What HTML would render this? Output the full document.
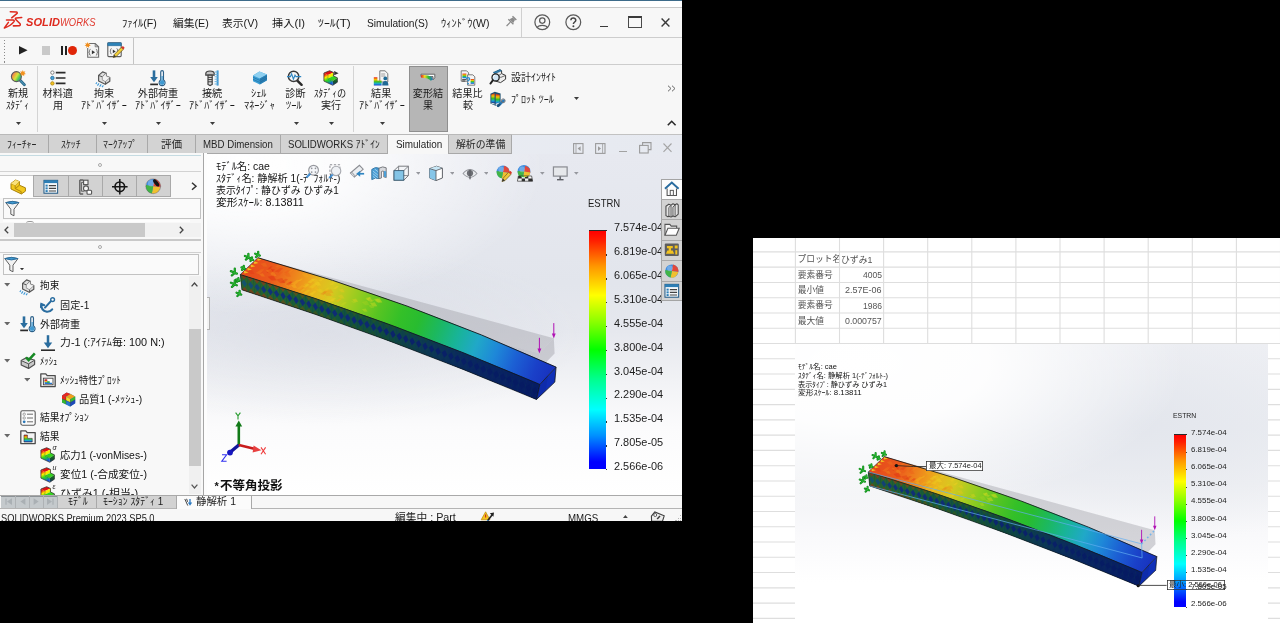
<!DOCTYPE html>
<html lang="ja"><head><meta charset="utf-8"><title>SOLIDWORKS Simulation - ひずみ (ESTRN) 結果</title>
<style>
html,body{margin:0;padding:0;background:#000}
body{width:1280px;height:623px;overflow:hidden;position:relative;font-family:"Liberation Sans","Noto Sans CJK JP",sans-serif}
#sw{position:absolute;left:0;top:0;width:682px;height:521px;background:#f7f7f7;overflow:hidden}
#xl{position:absolute;left:753px;top:238px;width:527px;height:385px;background:#fff;overflow:hidden}
.b{position:absolute}
.a{position:absolute;display:block}
.i{position:absolute;display:block;overflow:visible}
.t{position:absolute;white-space:nowrap;transform-origin:0 50%}
.blur{filter:blur(.3px)}
.soft{position:absolute;left:0;top:0;width:100%;height:100%;filter:blur(.35px)}
</style></head>
<body>
<svg width="0" height="0" style="position:absolute" aria-hidden="true"><defs><linearGradient id="rb" x1="0" y1="0" x2="0" y2="1"><stop offset="0" stop-color="#e8201a"/><stop offset=".3" stop-color="#f5c400"/><stop offset=".55" stop-color="#3cc024"/><stop offset=".8" stop-color="#18a8d8"/><stop offset="1" stop-color="#1a3cc8"/></linearGradient><linearGradient id="ctA" x1="0" y1="0" x2=".35" y2="1"><stop offset="0" stop-color="#e01010"/><stop offset=".18" stop-color="#f04010"/><stop offset=".38" stop-color="#ffee00"/><stop offset=".62" stop-color="#38d818"/><stop offset=".8" stop-color="#18b060"/><stop offset="1" stop-color="#1058e0"/></linearGradient><linearGradient id="ctB" x1="0" y1="0" x2="1" y2="1"><stop offset="0" stop-color="#f8a000"/><stop offset=".45" stop-color="#fff000"/><stop offset="1" stop-color="#a0e400"/></linearGradient><linearGradient id="ctC" x1="0" y1="0" x2="0" y2="1"><stop offset="0" stop-color="#1c8a1c"/><stop offset=".55" stop-color="#14502c"/><stop offset="1" stop-color="#103c90"/></linearGradient><linearGradient id="bmT" gradientUnits="userSpaceOnUse" x1="250" y1="262" x2="548" y2="376"><stop offset="0" stop-color="#e64c1c"/><stop offset="0.03" stop-color="#e8501c"/><stop offset="0.08" stop-color="#ea5a1c"/><stop offset="0.13" stop-color="#ee7a1c"/><stop offset="0.19" stop-color="#eea01c"/><stop offset="0.22" stop-color="#e6b81e"/><stop offset="0.27" stop-color="#d8c820"/><stop offset="0.32" stop-color="#b0cc20"/><stop offset="0.37" stop-color="#88cc20"/><stop offset="0.43" stop-color="#58c422"/><stop offset="0.5" stop-color="#34c028"/><stop offset="0.56" stop-color="#28bc30"/><stop offset="0.625" stop-color="#1cb860"/><stop offset="0.69" stop-color="#18b498"/><stop offset="0.755" stop-color="#20a8c8"/><stop offset="0.82" stop-color="#1e88d8"/><stop offset="0.885" stop-color="#1c60d4"/><stop offset="0.955" stop-color="#1a40c8"/><stop offset="1" stop-color="#1834c0"/></linearGradient><clipPath id="bmTop"><path d="M257.9 257.7Q407.0 299.7 556.1 367.1L539.9 384.4Q390.1 320.0 240.3 274.5Z"/></clipPath><g id="beam"><polygon points="257.9,257.7 553.8,338.2 539.4,353.2 240.3,274.5" fill="#94949c" fill-opacity=".36"/><polygon points="240.3,274.5 539.4,353.2 540.0,368.6 241.9,289.8" fill="#8a8a92" fill-opacity=".38"/><polygon points="553.8,338.2 554.6,353.6 540.0,368.6 539.4,353.2" fill="#a8a8b0" fill-opacity=".5"/><path d="M257.9 257.7Q407.0 299.7 556.1 367.1L539.9 384.4Q390.1 320.0 240.3 274.5Z" fill="url(#bmT)"/><g clip-path="url(#bmTop)"><polygon points="303.3,283.9 307.7,282.9 310.1,286.6 306.4,286.8" fill="#e8c81e" fill-opacity="0.27"/><polygon points="310.4,289.1 313.8,286.7 315.6,287.0 312.8,289.7" fill="#f6b41c" fill-opacity="0.26"/><polygon points="309.0,294.2 313.8,290.9 316.4,291.3 312.3,295.2" fill="#f0d020" fill-opacity="0.49"/><polygon points="326.9,292.7 331.8,291.6 334.4,295.7 330.3,295.9" fill="#f6b41c" fill-opacity="0.24"/><polygon points="274.9,271.6 280.2,267.9 283.1,268.3 278.6,272.6" fill="#e02c14" fill-opacity="0.34"/><polygon points="352.0,299.4 356.0,298.4 358.1,301.8 354.8,302.0" fill="#e0d020" fill-opacity="0.41"/><polygon points="307.3,282.3 312.4,278.7 315.2,279.1 310.8,283.2" fill="#f0d020" fill-opacity="0.43"/><polygon points="318.2,280.7 322.4,277.7 324.7,278.0 321.1,281.5" fill="#f0d020" fill-opacity="0.33"/><polygon points="361.9,309.2 365.6,308.4 367.6,311.5 364.5,311.7" fill="#d8dc20" fill-opacity="0.35"/><polygon points="370.0,303.3 374.7,302.2 377.3,306.2 373.3,306.4" fill="#d8dc20" fill-opacity="0.44"/><polygon points="288.5,271.9 291.6,269.7 293.3,270.0 290.7,272.5" fill="#f58a1a" fill-opacity="0.43"/><polygon points="267.7,268.5 270.8,266.3 272.5,266.6 269.9,269.1" fill="#e02c14" fill-opacity="0.44"/><polygon points="269.5,273.3 274.1,272.2 276.6,276.1 272.7,276.3" fill="#f7a21c" fill-opacity="0.34"/><polygon points="298.2,280.6 301.3,278.4 303.0,278.7 300.3,281.2" fill="#f6b41c" fill-opacity="0.50"/><polygon points="255.1,262.3 260.0,261.2 262.7,265.4 258.5,265.5" fill="#ee5a18" fill-opacity="0.23"/><polygon points="266.7,272.8 272.1,269.1 274.9,269.5 270.4,273.8" fill="#e02c14" fill-opacity="0.45"/><polygon points="301.6,274.3 306.4,273.2 309.0,277.2 305.0,277.4" fill="#f6b41c" fill-opacity="0.22"/><polygon points="291.1,283.9 296.9,279.8 300.1,280.3 295.1,285.0" fill="#f6b41c" fill-opacity="0.45"/><polygon points="267.2,269.4 271.2,268.5 273.4,271.9 270.0,272.1" fill="#e02c14" fill-opacity="0.45"/><polygon points="284.2,272.7 287.8,270.2 289.8,270.4 286.7,273.4" fill="#ee5a18" fill-opacity="0.47"/><polygon points="324.5,289.7 327.9,287.4 329.8,287.6 326.9,290.4" fill="#f0d020" fill-opacity="0.29"/><polygon points="338.7,289.8 342.7,288.8 344.8,292.2 341.5,292.3" fill="#e8c81e" fill-opacity="0.48"/><polygon points="373.3,299.1 378.0,298.0 380.6,302.0 376.6,302.2" fill="#c4d820" fill-opacity="0.30"/><polygon points="366.0,299.6 369.3,297.3 371.1,297.5 368.3,300.2" fill="#d8dc20" fill-opacity="0.34"/><polygon points="260.5,263.7 265.1,262.6 267.6,266.5 263.7,266.7" fill="#f58a1a" fill-opacity="0.25"/><polygon points="265.9,270.2 270.9,269.0 273.6,273.3 269.4,273.5" fill="#f58a1a" fill-opacity="0.39"/><polygon points="361.7,301.9 366.8,300.7 369.6,305.1 365.2,305.2" fill="#c4d820" fill-opacity="0.23"/><polygon points="327.2,290.2 331.2,289.3 333.4,292.7 330.0,292.9" fill="#ee7a1a" fill-opacity="0.24"/><polygon points="311.6,292.4 317.0,288.7 319.9,289.1 315.3,293.5" fill="#f6b41c" fill-opacity="0.32"/><polygon points="326.1,297.9 331.9,296.6 335.0,301.5 330.1,301.8" fill="#e8c81e" fill-opacity="0.46"/><polygon points="317.3,289.7 321.5,288.7 323.8,292.3 320.2,292.4" fill="#e8c81e" fill-opacity="0.39"/><polygon points="255.6,273.1 261.3,269.2 264.3,269.6 259.5,274.2" fill="#f58a1a" fill-opacity="0.33"/><polygon points="337.6,295.7 342.1,294.6 344.5,298.4 340.7,298.6" fill="#e8c81e" fill-opacity="0.37"/><polygon points="314.3,282.7 318.8,281.7 321.2,285.5 317.4,285.7" fill="#f0d020" fill-opacity="0.49"/><polygon points="259.0,274.1 262.9,273.2 265.0,276.4 261.7,276.6" fill="#f7a21c" fill-opacity="0.32"/><polygon points="265.3,274.6 268.9,272.1 270.8,272.4 267.8,275.3" fill="#ee5a18" fill-opacity="0.40"/><polygon points="297.5,290.2 301.8,287.3 304.1,287.6 300.5,291.1" fill="#ee7a1a" fill-opacity="0.28"/><polygon points="296.3,288.9 302.0,285.0 305.0,285.4 300.2,290.0" fill="#f6b41c" fill-opacity="0.28"/><polygon points="365.4,298.0 369.9,296.9 372.4,300.8 368.5,301.0" fill="#d8dc20" fill-opacity="0.42"/><polygon points="368.9,302.1 372.3,299.7 374.2,300.0 371.3,302.7" fill="#d8dc20" fill-opacity="0.30"/><polygon points="276.0,274.7 280.6,271.6 283.0,271.9 279.2,275.6" fill="#ee5a18" fill-opacity="0.42"/><polygon points="351.0,301.0 354.3,300.3 356.1,303.1 353.3,303.2" fill="#c4d820" fill-opacity="0.30"/><polygon points="320.4,293.9 325.2,290.7 327.7,291.0 323.7,294.9" fill="#ee7a1a" fill-opacity="0.40"/><polygon points="315.9,289.5 320.3,288.5 322.7,292.2 318.9,292.4" fill="#e8c81e" fill-opacity="0.44"/><polygon points="276.3,279.4 282.2,278.0 285.4,283.0 280.4,283.3" fill="#e02c14" fill-opacity="0.35"/><polygon points="322.6,292.1 328.5,290.7 331.7,295.7 326.7,295.9" fill="#ee7a1a" fill-opacity="0.28"/><polygon points="310.7,279.1 316.0,277.9 318.8,282.4 314.4,282.6" fill="#f0d020" fill-opacity="0.27"/><polygon points="284.1,273.9 288.7,272.8 291.1,276.7 287.3,276.8" fill="#ee5a18" fill-opacity="0.33"/><polygon points="340.3,304.8 344.6,301.9 346.9,302.2 343.2,305.7" fill="#d8dc20" fill-opacity="0.26"/><polygon points="302.7,286.9 306.9,284.0 309.2,284.3 305.6,287.7" fill="#f0d020" fill-opacity="0.35"/><polygon points="333.1,288.6 336.8,286.0 338.8,286.3 335.7,289.3" fill="#f0d020" fill-opacity="0.49"/><polygon points="368.4,305.4 372.3,304.5 374.3,307.8 371.1,308.0" fill="#c4d820" fill-opacity="0.32"/><polygon points="259.7,270.2 264.1,267.2 266.4,267.5 262.7,271.0" fill="#ee5a18" fill-opacity="0.36"/><polygon points="247.9,271.2 252.2,270.2 254.6,273.9 250.9,274.0" fill="#e02c14" fill-opacity="0.27"/><polygon points="285.7,284.6 290.2,281.5 292.6,281.8 288.8,285.4" fill="#e02c14" fill-opacity="0.48"/><polygon points="302.2,293.3 307.5,289.7 310.3,290.1 305.8,294.3" fill="#f0d020" fill-opacity="0.37"/><polygon points="280.9,282.0 285.5,278.8 288.0,279.2 284.1,282.9" fill="#e02c14" fill-opacity="0.31"/><polygon points="290.9,285.3 294.9,284.3 297.1,287.7 293.7,287.9" fill="#f6b41c" fill-opacity="0.49"/><polygon points="312.0,287.0 316.3,286.0 318.6,289.6 315.0,289.8" fill="#f6b41c" fill-opacity="0.36"/><polygon points="329.2,284.4 333.8,281.2 336.3,281.5 332.4,285.2" fill="#f0d020" fill-opacity="0.37"/><polygon points="374.6,299.5 379.7,298.3 382.4,302.6 378.1,302.8" fill="#d8dc20" fill-opacity="0.48"/><polygon points="299.5,291.2 303.4,288.6 305.5,288.8 302.2,292.0" fill="#e8c81e" fill-opacity="0.36"/><polygon points="284.6,284.3 289.2,283.2 291.7,287.1 287.8,287.3" fill="#f7a21c" fill-opacity="0.27"/><polygon points="318.0,295.7 323.1,294.5 325.9,298.8 321.6,299.0" fill="#f6b41c" fill-opacity="0.23"/><polygon points="274.9,266.9 278.9,264.1 281.1,264.4 277.7,267.6" fill="#f58a1a" fill-opacity="0.29"/><polygon points="308.9,287.2 314.5,283.3 317.5,283.7 312.8,288.2" fill="#f0d020" fill-opacity="0.42"/><polygon points="329.6,300.6 333.8,297.7 336.1,298.0 332.5,301.4" fill="#f0d020" fill-opacity="0.45"/><polygon points="323.5,290.1 328.1,289.0 330.6,292.9 326.7,293.1" fill="#f6b41c" fill-opacity="0.29"/><polygon points="335.5,301.2 339.5,298.4 341.7,298.7 338.3,302.0" fill="#f6b41c" fill-opacity="0.47"/><polygon points="267.7,276.7 273.4,275.4 276.4,280.2 271.6,280.4" fill="#e02c14" fill-opacity="0.47"/><polygon points="257.1,257.8 261.9,259.8 257.7,260.8" fill="#f4e424" fill-opacity=".75"/><polygon points="253.7,261.0 258.5,263.0 254.3,264.0" fill="#f4e424" fill-opacity=".75"/><polygon points="250.4,264.2 255.2,266.2 251.0,267.2" fill="#f4e424" fill-opacity=".75"/><polygon points="247.1,267.4 251.9,269.4 247.7,270.4" fill="#f4e424" fill-opacity=".75"/><polygon points="243.7,270.6 248.5,272.6 244.3,273.6" fill="#f4e424" fill-opacity=".75"/></g><path d="M240.3 274.5Q390.1 320.0 539.9 384.4L536.5 399.5Q389.2 337.2 241.9 289.8Z" fill="#14506e"/><polygon points="240.3,274.5 246.8,276.5 248.3,291.9 241.9,289.8" fill="#3d8a35"/><polygon points="240.3,274.5 246.8,276.5 244.0,279.6" fill="#a6571e"/><polygon points="241.9,289.8 248.3,291.9 244.7,287.0" fill="#a15c1f"/><polygon points="241.6,282.3 244.0,279.6 247.0,284.0 244.7,287.0" fill="#1c7590"/><polygon points="246.8,276.5 253.3,278.5 254.7,293.9 248.3,291.9" fill="#3a8a36"/><polygon points="246.8,276.5 253.3,278.5 250.5,281.7" fill="#a35a1f"/><polygon points="248.3,291.9 254.7,293.9 251.1,289.1" fill="#9e5f1f"/><polygon points="248.1,284.3 250.5,281.7 253.5,286.1 251.1,289.1" fill="#1c6b97"/><polygon points="253.3,278.5 259.8,280.5 261.1,296.0 254.7,293.9" fill="#368a38"/><polygon points="253.3,278.5 259.8,280.5 256.9,283.7" fill="#a05d1f"/><polygon points="254.7,293.9 261.1,296.0 257.6,291.1" fill="#9b6120"/><polygon points="254.5,286.4 256.9,283.7 260.0,288.1 257.6,291.1" fill="#1b5b9c"/><polygon points="259.8,280.5 266.4,282.6 267.5,298.2 261.1,296.0" fill="#338a39"/><polygon points="259.8,280.5 266.4,282.6 263.4,285.7" fill="#9d5f20"/><polygon points="261.1,296.0 267.5,298.2 264.0,293.2" fill="#946520"/><polygon points="261.0,288.4 263.4,285.7 266.4,290.2 264.0,293.2" fill="#1a4ba1"/><polygon points="266.4,282.6 272.9,284.6 273.9,300.3 267.5,298.2" fill="#308a3b"/><polygon points="266.4,282.6 272.9,284.6 269.9,287.8" fill="#9a6220"/><polygon points="267.5,298.2 273.9,300.3 270.4,295.3" fill="#8b6a21"/><polygon points="267.5,290.5 269.9,287.8 272.9,292.3 270.4,295.3" fill="#1946a1"/><polygon points="272.9,284.6 279.4,286.7 280.3,302.4 273.9,300.3" fill="#2c8a3c"/><polygon points="272.9,284.6 279.4,286.7 276.4,289.9" fill="#926620"/><polygon points="273.9,300.3 280.3,302.4 276.9,297.4" fill="#826e21"/><polygon points="273.9,292.6 276.4,289.9 279.3,294.4 276.9,297.4" fill="#1943a0"/><polygon points="279.4,286.7 285.9,288.8 286.7,304.6 280.3,302.4" fill="#2a883e"/><polygon points="279.4,286.7 285.9,288.8 282.9,292.0" fill="#896a21"/><polygon points="280.3,302.4 286.7,304.6 283.3,299.6" fill="#797221"/><polygon points="280.4,294.7 282.9,292.0 285.8,296.5 283.3,299.6" fill="#18419e"/><polygon points="285.9,288.8 292.4,290.9 293.1,306.7 286.7,304.6" fill="#288640"/><polygon points="285.9,288.8 292.4,290.9 289.4,294.1" fill="#816f21"/><polygon points="286.7,304.6 293.1,306.7 289.7,301.7" fill="#717722"/><polygon points="286.8,296.8 289.4,294.1 292.3,298.6 289.7,301.7" fill="#18409e"/><polygon points="292.4,290.9 298.9,293.0 299.5,308.9 293.1,306.7" fill="#268442"/><polygon points="292.4,290.9 298.9,293.0 295.8,296.2" fill="#787321"/><polygon points="293.1,306.7 299.5,308.9 296.2,303.9" fill="#687a22"/><polygon points="293.3,299.0 295.8,296.2 298.7,300.8 296.2,303.9" fill="#173f9e"/><polygon points="298.9,293.0 305.4,295.2 305.9,311.1 299.5,308.9" fill="#248144"/><polygon points="298.9,293.0 305.4,295.2 302.3,298.4" fill="#6f7722"/><polygon points="299.5,308.9 305.9,311.1 302.6,306.0" fill="#617a24"/><polygon points="299.7,301.1 302.3,298.4 305.2,303.0 302.6,306.0" fill="#173f9d"/><polygon points="305.4,295.2 311.9,297.3 312.3,313.3 305.9,311.1" fill="#227f46"/><polygon points="305.4,295.2 311.9,297.3 308.8,300.6" fill="#677a23"/><polygon points="305.9,311.1 312.3,313.3 309.0,308.2" fill="#5a7a26"/><polygon points="306.2,303.3 308.8,300.6 311.6,305.2 309.0,308.2" fill="#163e9d"/><polygon points="311.9,297.3 318.5,299.5 318.8,315.5 312.3,313.3" fill="#207d48"/><polygon points="311.9,297.3 318.5,299.5 315.3,302.8" fill="#607a25"/><polygon points="312.3,313.3 318.8,315.5 315.5,310.4" fill="#527a28"/><polygon points="312.7,305.5 315.3,302.8 318.1,307.4 315.5,310.4" fill="#163e9d"/><polygon points="318.5,299.5 325.0,301.7 325.2,317.8 318.8,315.5" fill="#1f7b49"/><polygon points="318.5,299.5 325.0,301.7 321.8,305.0" fill="#597a27"/><polygon points="318.8,315.5 325.2,317.8 321.9,312.7" fill="#4b7a2a"/><polygon points="319.1,307.7 321.8,305.0 324.5,309.6 321.9,312.7" fill="#163e9d"/><polygon points="325.0,301.7 331.5,303.9 331.6,320.0 325.2,317.8" fill="#1d794b"/><polygon points="325.0,301.7 331.5,303.9 328.3,307.2" fill="#517a28"/><polygon points="325.2,317.8 331.6,320.0 328.3,314.9" fill="#447a2c"/><polygon points="325.6,309.9 328.3,307.2 331.0,311.8 328.3,314.9" fill="#153d9d"/><polygon points="331.5,303.9 338.0,306.2 338.0,322.3 331.6,320.0" fill="#1c774d"/><polygon points="331.5,303.9 338.0,306.2 334.7,309.4" fill="#4a7a2a"/><polygon points="331.6,320.0 338.0,322.3 334.8,317.1" fill="#3c7a2e"/><polygon points="332.0,312.2 334.7,309.4 337.5,314.1 334.8,317.1" fill="#153d9c"/><polygon points="338.0,306.2 344.5,308.4 344.4,324.6 338.0,322.3" fill="#1b754d"/><polygon points="338.0,306.2 344.5,308.4 341.2,311.7" fill="#437a2c"/><polygon points="338.0,322.3 344.4,324.6 341.2,319.4" fill="#357a30"/><polygon points="338.5,314.4 341.2,311.7 343.9,316.3 341.2,319.4" fill="#143c9c"/><polygon points="344.5,308.4 351.0,310.7 350.8,326.9 344.4,324.6" fill="#1a734e"/><polygon points="344.5,308.4 351.0,310.7 347.7,313.9" fill="#3b7a2e"/><polygon points="344.4,324.6 350.8,326.9 347.6,321.7" fill="#317833"/><polygon points="345.0,316.7 347.7,313.9 350.4,318.6 347.6,321.7" fill="#143b9b"/><polygon points="351.0,310.7 357.5,313.0 357.2,329.2 350.8,326.9" fill="#1a714f"/><polygon points="351.0,310.7 357.5,313.0 354.2,316.2" fill="#347a30"/><polygon points="350.8,326.9 357.2,329.2 354.1,324.0" fill="#2e7536"/><polygon points="351.4,319.0 354.2,316.2 356.8,320.9 354.1,324.0" fill="#133a9a"/><polygon points="357.5,313.0 364.0,315.3 363.6,331.5 357.2,329.2" fill="#196f4f"/><polygon points="357.5,313.0 364.0,315.3 360.7,318.5" fill="#317733"/><polygon points="357.2,329.2 363.6,331.5 360.5,326.3" fill="#2a7239"/><polygon points="357.9,321.3 360.7,318.5 363.3,323.2 360.5,326.3" fill="#133998"/><polygon points="364.0,315.3 370.6,317.6 370.0,333.8 363.6,331.5" fill="#196d50"/><polygon points="364.0,315.3 370.6,317.6 367.2,320.8" fill="#2d7436"/><polygon points="363.6,331.5 370.0,333.8 366.9,328.6" fill="#276f3c"/><polygon points="364.3,323.6 367.2,320.8 369.8,325.5 366.9,328.6" fill="#133896"/><polygon points="370.6,317.6 377.1,320.0 376.4,336.2 370.0,333.8" fill="#186b51"/><polygon points="370.6,317.6 377.1,320.0 373.6,323.2" fill="#2a7239"/><polygon points="370.0,333.8 376.4,336.2 373.3,331.0" fill="#246c3f"/><polygon points="370.8,325.9 373.6,323.2 376.2,327.9 373.3,331.0" fill="#123694"/><polygon points="377.1,320.0 383.6,322.3 382.8,338.5 376.4,336.2" fill="#176952"/><polygon points="377.1,320.0 383.6,322.3 380.1,325.5" fill="#276f3c"/><polygon points="376.4,336.2 382.8,338.5 379.8,333.3" fill="#216a42"/><polygon points="377.2,328.3 380.1,325.5 382.7,330.3 379.8,333.3" fill="#123593"/><polygon points="383.6,322.3 390.1,324.7 389.2,340.9 382.8,338.5" fill="#176654"/><polygon points="383.6,322.3 390.1,324.7 386.6,327.9" fill="#236c3f"/><polygon points="382.8,338.5 389.2,340.9 386.2,335.7" fill="#1d6745"/><polygon points="383.7,330.6 386.6,327.9 389.1,332.6 386.2,335.7" fill="#113491"/><polygon points="390.1,324.7 396.6,327.1 395.6,343.3 389.2,340.9" fill="#166357"/><polygon points="390.1,324.7 396.6,327.1 393.1,330.3" fill="#206942"/><polygon points="389.2,340.9 395.6,343.3 392.6,338.1" fill="#1a6448"/><polygon points="390.2,333.0 393.1,330.3 395.6,335.0 392.6,338.1" fill="#11328f"/><polygon points="396.6,327.1 403.1,329.5 402.0,345.7 395.6,343.3" fill="#155f5b"/><polygon points="396.6,327.1 403.1,329.5 399.6,332.7" fill="#1d6646"/><polygon points="395.6,343.3 402.0,345.7 399.1,340.5" fill="#195f4d"/><polygon points="396.6,335.4 399.6,332.7 402.1,337.4 399.1,340.5" fill="#10318d"/><polygon points="403.1,329.5 409.6,332.0 408.4,348.1 402.0,345.7" fill="#155b5f"/><polygon points="403.1,329.5 409.6,332.0 406.1,335.1" fill="#1a6349"/><polygon points="402.0,345.7 408.4,348.1 405.5,342.9" fill="#175b52"/><polygon points="403.1,337.8 406.1,335.1 408.5,339.9 405.5,342.9" fill="#10308c"/><polygon points="409.6,332.0 416.2,334.4 414.8,350.6 408.4,348.1" fill="#145862"/><polygon points="409.6,332.0 416.2,334.4 412.5,337.6" fill="#185e4e"/><polygon points="408.4,348.1 414.8,350.6 411.9,345.3" fill="#165658"/><polygon points="409.5,340.3 412.5,337.6 415.0,342.3 411.9,345.3" fill="#0f2f8b"/><polygon points="416.2,334.4 422.7,336.9 421.2,353.0 414.8,350.6" fill="#145466"/><polygon points="416.2,334.4 422.7,336.9 419.0,340.0" fill="#175a53"/><polygon points="414.8,350.6 421.2,353.0 418.4,347.8" fill="#15515d"/><polygon points="416.0,342.7 419.0,340.0 421.4,344.8 418.4,347.8" fill="#0f2e8a"/><polygon points="422.7,336.9 429.2,339.4 427.6,355.5 421.2,353.0" fill="#13506a"/><polygon points="422.7,336.9 429.2,339.4 425.5,342.5" fill="#165558"/><polygon points="421.2,353.0 427.6,355.5 424.8,350.2" fill="#144d62"/><polygon points="422.5,345.2 425.5,342.5 427.9,347.2 424.8,350.2" fill="#0f2e8a"/><polygon points="429.2,339.4 435.7,341.9 434.0,358.0 427.6,355.5" fill="#124c6d"/><polygon points="429.2,339.4 435.7,341.9 432.0,345.0" fill="#15515d"/><polygon points="427.6,355.5 434.0,358.0 431.2,352.7" fill="#124867"/><polygon points="428.9,347.6 432.0,345.0 434.3,349.7 431.2,352.7" fill="#0e2d89"/><polygon points="435.7,341.9 442.2,344.4 440.4,360.5 434.0,358.0" fill="#124870"/><polygon points="435.7,341.9 442.2,344.4 438.5,347.5" fill="#134c63"/><polygon points="434.0,358.0 440.4,360.5 437.7,355.2" fill="#11446c"/><polygon points="435.4,350.1 438.5,347.5 440.8,352.2 437.7,355.2" fill="#0e2c88"/><polygon points="442.2,344.4 448.7,347.0 446.8,363.0 440.4,360.5" fill="#114573"/><polygon points="442.2,344.4 448.7,347.0 445.0,350.0" fill="#124768"/><polygon points="440.4,360.5 446.8,363.0 444.1,357.7" fill="#104070"/><polygon points="441.8,352.6 445.0,350.0 447.3,354.8 444.1,357.7" fill="#0d2c88"/><polygon points="448.7,347.0 455.2,349.5 453.2,365.5 446.8,363.0" fill="#104176"/><polygon points="448.7,347.0 455.2,349.5 451.5,352.5" fill="#11436d"/><polygon points="446.8,363.0 453.2,365.5 450.5,360.2" fill="#0f3e72"/><polygon points="448.3,355.2 451.5,352.5 453.7,357.3 450.5,360.2" fill="#0d2b87"/><polygon points="455.2,349.5 461.7,352.1 459.6,368.0 453.2,365.5" fill="#103d79"/><polygon points="455.2,349.5 461.7,352.1 457.9,355.1" fill="#103f71"/><polygon points="453.2,365.5 459.6,368.0 457.0,362.8" fill="#0f3c73"/><polygon points="454.8,357.7 457.9,355.1 460.2,359.8 457.0,362.8" fill="#0c2a86"/><polygon points="461.7,352.1 468.3,354.7 466.1,370.6 459.6,368.0" fill="#0f397c"/><polygon points="461.7,352.1 468.3,354.7 464.4,357.7" fill="#0f3d72"/><polygon points="459.6,368.0 466.1,370.6 463.4,365.3" fill="#0e3975"/><polygon points="461.2,360.3 464.4,357.7 466.6,362.4 463.4,365.3" fill="#0c2a86"/><polygon points="468.3,354.7 474.8,357.3 472.5,373.1 466.1,370.6" fill="#0e357f"/><polygon points="468.3,354.7 474.8,357.3 470.9,360.3" fill="#0f3b74"/><polygon points="466.1,370.6 472.5,373.1 469.8,367.9" fill="#0e3777"/><polygon points="467.7,362.8 470.9,360.3 473.1,365.0 469.8,367.9" fill="#0c2985"/><polygon points="474.8,357.3 481.3,359.9 478.9,375.7 472.5,373.1" fill="#0e3380"/><polygon points="474.8,357.3 481.3,359.9 477.4,362.9" fill="#0e3975"/><polygon points="472.5,373.1 478.9,375.7 476.3,370.5" fill="#0e3578"/><polygon points="474.1,365.4 477.4,362.9 479.6,367.6 476.3,370.5" fill="#0b2884"/><polygon points="481.3,359.9 487.8,362.6 485.3,378.3 478.9,375.7" fill="#0d3281"/><polygon points="481.3,359.9 487.8,362.6 483.9,365.5" fill="#0e3777"/><polygon points="478.9,375.7 485.3,378.3 482.7,373.0" fill="#0d337a"/><polygon points="480.6,368.0 483.9,365.5 486.0,370.2 482.7,373.0" fill="#0b2884"/><polygon points="487.8,362.6 494.3,365.2 491.7,380.9 485.3,378.3" fill="#0d3081"/><polygon points="487.8,362.6 494.3,365.2 490.4,368.1" fill="#0d3578"/><polygon points="485.3,378.3 491.7,380.9 489.1,375.7" fill="#0d317b"/><polygon points="487.0,370.6 490.4,368.1 492.5,372.8 489.1,375.7" fill="#0b2783"/><polygon points="494.3,365.2 500.8,367.9 498.1,383.5 491.7,380.9" fill="#0d2f81"/><polygon points="494.3,365.2 500.8,367.9 496.8,370.8" fill="#0d337a"/><polygon points="491.7,380.9 498.1,383.5 495.5,378.3" fill="#0c2f7d"/><polygon points="493.5,373.3 496.8,370.8 498.9,375.5 495.5,378.3" fill="#0a2683"/><polygon points="500.8,367.9 507.3,370.6 504.5,386.1 498.1,383.5" fill="#0c2e82"/><polygon points="500.8,367.9 507.3,370.6 503.3,373.5" fill="#0d317b"/><polygon points="498.1,383.5 504.5,386.1 502.0,380.9" fill="#0c2d7e"/><polygon points="500.0,375.9 503.3,373.5 505.4,378.2 502.0,380.9" fill="#0a2682"/><polygon points="507.3,370.6 513.8,373.3 510.9,388.8 504.5,386.1" fill="#0c2c82"/><polygon points="507.3,370.6 513.8,373.3 509.8,376.2" fill="#0c2f7d"/><polygon points="504.5,386.1 510.9,388.8 508.4,383.6" fill="#0b2b80"/><polygon points="506.4,378.6 509.8,376.2 511.8,380.8 508.4,383.6" fill="#0a2582"/><polygon points="513.8,373.3 520.4,376.1 517.3,391.4 510.9,388.8" fill="#0b2b83"/><polygon points="513.8,373.3 520.4,376.1 516.3,378.9" fill="#0c2d7f"/><polygon points="510.9,388.8 517.3,391.4 514.8,386.3" fill="#0b2981"/><polygon points="512.9,381.3 516.3,378.9 518.3,383.5 514.8,386.3" fill="#0a2482"/><polygon points="520.4,376.1 526.9,378.8 523.7,394.1 517.3,391.4" fill="#0b2983"/><polygon points="520.4,376.1 526.9,378.8 522.8,381.6" fill="#0b2b80"/><polygon points="517.3,391.4 523.7,394.1 521.3,388.9" fill="#0a2783"/><polygon points="519.3,384.0 522.8,381.6 524.8,386.3 521.3,388.9" fill="#0a2481"/><polygon points="526.9,378.8 533.4,381.6 530.1,396.8 523.7,394.1" fill="#0b2883"/><polygon points="526.9,378.8 533.4,381.6 529.3,384.3" fill="#0b2982"/><polygon points="523.7,394.1 530.1,396.8 527.7,391.6" fill="#0a2684"/><polygon points="525.8,386.7 529.3,384.3 531.2,389.0 527.7,391.6" fill="#092381"/><polygon points="533.4,381.6 539.9,384.4 536.5,399.5 530.1,396.8" fill="#0a2784"/><polygon points="533.4,381.6 539.9,384.4 535.7,387.1" fill="#0a2783"/><polygon points="530.1,396.8 536.5,399.5 534.1,394.4" fill="#0a2684"/><polygon points="532.3,389.4 535.7,387.1 537.7,391.7 534.1,394.4" fill="#092280"/><path d="M240.3 274.5Q390.1 320.0 539.9 384.4L536.5 399.5Q389.2 337.2 241.9 289.8Z" fill="#00081c" fill-opacity=".3"/><polygon points="556.1,367.1 539.9,384.4 536.5,399.5 554.8,382.1" fill="#1030b8"/><polygon points="548.0,375.8 539.9,384.4 536.5,399.5 545.6,390.8" fill="#0d2aa0" fill-opacity=".55"/><g fill="none" stroke="#101418" stroke-width=".9" stroke-linejoin="round"><path d="M257.9 257.7Q407.0 299.7 556.1 367.1"/><path d="M240.3 274.5Q390.1 320.0 539.9 384.4" stroke-opacity=".8"/><path d="M241.9 289.8Q389.2 337.2 536.5 399.5" stroke-opacity=".75"/><path d="M556.1,367.1L539.9,384.4L536.5,399.5L554.8,382.1L556.1,367.1" stroke-opacity=".85"/><path d="M257.9,257.7L240.3,274.5L241.9,289.8" stroke-opacity=".6"/></g><path d="M258.2 255.0l-3.0 -1.3M258.2 255.0l0 -3.2M258.2 255.0l-2.2 2.0M258.2 255.0l1.6 0.6M248.4 257.4l-3.4 -1.4M248.4 257.4l0 -3.6M248.4 257.4l-2.5 2.2M248.4 257.4l1.8 0.7M252.0 259.6l-2.1 -0.9M252.0 259.6l0 -2.2M252.0 259.6l-1.5 1.4M252.0 259.6l1.1 0.4M243.8 268.4l-2.3 -1.0M243.8 268.4l0 -2.4M243.8 268.4l-1.7 1.5M243.8 268.4l1.2 0.5M234.8 272.8l-3.9 -1.7M234.8 272.8l0 -4.2M234.8 272.8l-2.9 2.6M234.8 272.8l2.1 0.8M234.8 284.4l-3.8 -1.6M234.8 284.4l0 -4.0M234.8 284.4l-2.8 2.5M234.8 284.4l2.0 0.8M239.6 294.0l-3.0 -1.3M239.6 294.0l0 -3.2M239.6 294.0l-2.2 2.0M239.6 294.0l1.6 0.6M238.4 280.4l-2.1 -0.9M238.4 280.4l0 -2.2M238.4 280.4l-1.5 1.4M238.4 280.4l1.1 0.4" fill="none" stroke="#0f8c1a" stroke-width="2.300" stroke-linecap="round"/><path d="M258.2 255.0l-3.0 -1.3M258.2 255.0l0 -3.2M258.2 255.0l-2.2 2.0M258.2 255.0l1.6 0.6M248.4 257.4l-3.4 -1.4M248.4 257.4l0 -3.6M248.4 257.4l-2.5 2.2M248.4 257.4l1.8 0.7M252.0 259.6l-2.1 -0.9M252.0 259.6l0 -2.2M252.0 259.6l-1.5 1.4M252.0 259.6l1.1 0.4M243.8 268.4l-2.3 -1.0M243.8 268.4l0 -2.4M243.8 268.4l-1.7 1.5M243.8 268.4l1.2 0.5M234.8 272.8l-3.9 -1.7M234.8 272.8l0 -4.2M234.8 272.8l-2.9 2.6M234.8 272.8l2.1 0.8M234.8 284.4l-3.8 -1.6M234.8 284.4l0 -4.0M234.8 284.4l-2.8 2.5M234.8 284.4l2.0 0.8M239.6 294.0l-3.0 -1.3M239.6 294.0l0 -3.2M239.6 294.0l-2.2 2.0M239.6 294.0l1.6 0.6M238.4 280.4l-2.1 -0.9M238.4 280.4l0 -2.2M238.4 280.4l-1.5 1.4M238.4 280.4l1.1 0.4" fill="none" stroke="#2cba34" stroke-width=".9" stroke-linecap="round"/><path d="M553.8 323.1V335.4" stroke="#b012b4" stroke-width="1"/><path d="M551.9 333.4h3.800l-1.900 5z" fill="#b012b4"/><path d="M539.4 337.8V350.4" stroke="#b012b4" stroke-width="1"/><path d="M537.5 348.4h3.800l-1.900 5z" fill="#b012b4"/></g>
</defs></svg>
<div id="sw"><div class="soft">
<div class="b" style="left:0px;top:0px;width:682px;height:1.4px;background:#3d6b8a;"></div>
<div class="b" style="left:0px;top:1.4px;width:682px;height:5.6px;background:#fff;"></div>
<div class="b" style="left:0px;top:7px;width:682px;height:1px;background:#c9c9c9;"></div>
<div class="b" style="left:0px;top:37px;width:682px;height:1px;background:#cdcdcd;"></div>
<div class="b" style="left:0px;top:64px;width:682px;height:1px;background:#cdcdcd;"></div>
<div class="b" style="left:133.2px;top:38px;width:1px;height:26px;background:#c4c4c4;"></div>
<div class="b" style="left:521px;top:8px;width:1px;height:29px;background:#d0d0d0;"></div>
<svg class="i blur" style="left:3.9px;top:10.6px;" width="18" height="17.6" viewBox="0 0 18 17.6"><g fill="none" stroke="#de2a1e" stroke-width="1.55" stroke-linecap="round" stroke-linejoin="round"><path d="M6.300 .8L12.300 .9Q13.500 1.200 13.100 2.400L7.700 6.800"/><path d="M2.500 9H9.200Q10.700 9.400 10 10.600 7 14.700 .4 17L4.400 11.400"/><path d="M17.700 6.600L12.300 7Q11 7.400 11.500 8.300L16.100 12.800Q16.700 14.400 15.400 14.700L9.400 14.900"/></g></svg><div class="t" style="left:25.800px;top:15.200px;height:14px;line-height:14px;font-size:11.6px;color:#de291d;font-weight:bold;font-style:italic;transform:scaleX(.95);letter-spacing:.1px">SOLID</div><div class="t" style="left:59.800px;top:15.200px;height:14px;line-height:14px;font-size:11.6px;color:#e0362b;font-style:italic;transform:scaleX(.81)">WORKS</div>
<div class="t" style="left:121.5px;top:17.2px;font-size:10.40px;color:#1a1a1a;line-height:14px;height:14px;transform:scaleX(1.023);">ﾌｧｲﾙ(F)</div>
<div class="t" style="left:173.2px;top:17.2px;font-size:10.40px;color:#1a1a1a;line-height:14px;height:14px;transform:scaleX(1.033);">編集(E)</div>
<div class="t" style="left:222.0px;top:17.2px;font-size:10.40px;color:#1a1a1a;line-height:14px;height:14px;transform:scaleX(1.039);">表示(V)</div>
<div class="t" style="left:271.7px;top:17.2px;font-size:10.40px;color:#1a1a1a;line-height:14px;height:14px;transform:scaleX(1.078);">挿入(I)</div>
<div class="t" style="left:317.5px;top:17.2px;font-size:10.40px;color:#1a1a1a;line-height:14px;height:14px;transform:scaleX(1.136);">ﾂｰﾙ(T)</div>
<div class="t" style="left:366.9px;top:17.2px;font-size:10.40px;color:#1a1a1a;line-height:14px;height:14px;transform:scaleX(0.979);">Simulation(S)</div>
<div class="t" style="left:441.4px;top:17.2px;font-size:10.40px;color:#1a1a1a;line-height:14px;height:14px;transform:scaleX(1.010);">ｳｨﾝﾄﾞｳ(W)</div>
<svg class="i blur" style="left:504.2px;top:16.2px;" width="13" height="12.6" viewBox="0 0 13 12.6"><g transform="translate(7.600 5) rotate(45)" fill="#8a8a8a"><rect x="-2.700" y="-4.700" width="5.400" height="1.400"/><path d="M-1.600-3.300h3.200l1 3.600h-5.200z"/><rect x="-3.600" y=".3" width="7.200" height="1.400"/><rect x="-.6" y="1.700" width="1.200" height="5.400"/></g></svg><svg class="i" style="left:534px;top:13.7px;" width="16.6" height="16.6" viewBox="0 0 16.6 16.6"><g fill="none" stroke="#5a5a5a" stroke-width="1.25"><circle cx="8.300" cy="8.300" r="7.400"/><circle cx="8.300" cy="6.600" r="2.700"/><path d="M3.300 13.600C4.300 10.800 12.300 10.800 13.300 13.600"/></g></svg><svg class="i" style="left:564.7px;top:13.7px;" width="16.6" height="16.6" viewBox="0 0 16.6 16.6"><circle cx="8.300" cy="8.300" r="7.400" fill="none" stroke="#5a5a5a" stroke-width="1.25"/><path d="M5.900 6.300C5.900 3.400 10.800 3.400 10.800 6.200 10.800 8 8.400 8 8.400 10.100" fill="none" stroke="#444" stroke-width="1.500"/><circle cx="8.400" cy="12.300" r="1" fill="#444"/></svg><div class="b" style="left:599.6px;top:25.6px;width:8.8px;height:1.7px;background:#3a3a3a"></div><div class="b" style="left:628.3px;top:16.200px;width:13.600px;height:11.800px;box-sizing:border-box;border:1.300px solid #4a4a4a;border-top:2.400px solid #3a3a3a"></div><svg class="i" style="left:661px;top:17.8px;" width="9" height="9" viewBox="0 0 9 9"><path d="M.6.6l7.800 7.800M8.400.6L.6 8.400" stroke="#3a3a3a" stroke-width="1.400" fill="none"/></svg>
<div class="b" style="left:3.700px;top:40px;width:1.200px;height:1.200px;background:#8a8a8a"></div><div class="b" style="left:3.700px;top:43.05px;width:1.200px;height:1.200px;background:#8a8a8a"></div><div class="b" style="left:3.700px;top:46.1px;width:1.200px;height:1.200px;background:#8a8a8a"></div><div class="b" style="left:3.700px;top:49.15px;width:1.200px;height:1.200px;background:#8a8a8a"></div><div class="b" style="left:3.700px;top:52.2px;width:1.200px;height:1.200px;background:#8a8a8a"></div><div class="b" style="left:3.700px;top:55.25px;width:1.200px;height:1.200px;background:#8a8a8a"></div><div class="b" style="left:3.700px;top:58.3px;width:1.200px;height:1.200px;background:#8a8a8a"></div><div class="b" style="left:3.700px;top:61.35px;width:1.200px;height:1.200px;background:#8a8a8a"></div><svg class="i" style="left:18.6px;top:46.3px;" width="8.6" height="8.4" viewBox="0 0 8.6 8.4"><path d="M0 0L8.600 4.200 0 8.400Z" fill="#222"/></svg><div class="b" style="left:41.900px;top:46.300px;width:8.500px;height:8.500px;background:#c9c9c9"></div><div class="b" style="left:61.300px;top:46px;width:2.100px;height:8.800px;background:#222"></div><div class="b" style="left:64.800px;top:46px;width:2.100px;height:8.800px;background:#222"></div><div class="b" style="left:68.100px;top:45.900px;width:9px;height:9px;border-radius:50%;background:#e02608"></div><svg class="i blur" style="left:84.5px;top:42px;" width="15" height="16.5" viewBox="0 0 15 16.5"><path d="M4 1.500h6.200l3.400 3.300v10.400H2.700V6" fill="#f4f4f4" stroke="#6e6e6e" stroke-width="1.100"/><path d="M10.200 1.500v3.300h3.400" fill="none" stroke="#6e6e6e" stroke-width=".9"/><path d="M5.600 7.300q-1.100 0-1.100 1.300v.7q0 .9-.8 1 .8.1.8 1v.7q0 1.300 1.100 1.300M10.900 7.300q1.100 0 1.100 1.300v.7q0 .9.8 1-.8.1-.8 1v.7q0 1.300-1.100 1.300" fill="none" stroke="#5a5a5a" stroke-width=".8"/><path d="M6.900 8.300l3.200 2-3.200 2z" fill="#333"/><path d="M2.700 0l.7 1.700 1.800-.6-.9 1.600 1.600 1-1.900.3.100 1.900-1.400-1.300L1.300 5.900l.1-1.900L-.5 3.700l1.600-1L.2 1.100l1.800.6z" fill="#f08c1a"/></svg><svg class="i blur" style="left:107.4px;top:42.3px;" width="17.5" height="16" viewBox="0 0 17.5 16"><rect x=".8" y=".8" width="13.400" height="13.800" rx="1" fill="#f6f6f6" stroke="#5c5c5c" stroke-width="1.100"/><rect x=".8" y=".8" width="13.400" height="3" fill="#2d83b8" stroke="#2a6d9a" stroke-width=".6"/><path d="M4.600 6.600q-1 0-1 1.200v.6q0 .8-.7.9.7.1.7.9v.6q0 1.200 1 1.200M9.600 6.600q1 0 1 1.200v.6q0 .8.7.9-.7.1-.7.9v.6q0 1.200-1 1.200" fill="none" stroke="#5a5a5a" stroke-width=".8"/><path d="M5.800 7.600l2.900 1.800-2.900 1.800z" fill="#333"/><path d="M14.200 5.400l2.100 2-7.200 7.200-2.800 1 .8-2.900z" fill="#f2cf3a" stroke="#5b4a1a" stroke-width=".7"/><path d="M14.200 5.400l1-1q.6-.5 1.300.1l.8.8q.5.600-.1 1.200l-.9.900z" fill="#d8362a"/><path d="M7.100 12.700l-.8 2.900 2.800-1z" fill="#3a3a3a"/></svg>
<div class="b" style="left:37.2px;top:66px;width:1px;height:66px;background:#d4d4d4;"></div>
<div class="b" style="left:353.4px;top:66px;width:1px;height:66px;background:#d4d4d4;"></div>
<div class="b" style="left:409.4px;top:66px;width:38.8px;height:66.4px;background:#b6b6b6;box-shadow:inset 0 0 0 1px #8f8f8f;"></div>
<div class="t" style="left:7.9px;top:87.4px;font-size:10.10px;color:#1a1a1a;line-height:14px;height:14px;">新規</div>
<div class="t" style="left:5.8px;top:99.4px;font-size:10.10px;color:#1a1a1a;line-height:14px;height:14px;transform:scaleX(0.910);">ｽﾀﾃﾞｨ</div>
<svg class="a" style="left:16.3px;top:121.8px" width="5" height="3" viewBox="0 0 10 6"><path d="M0 0H10L5 6Z" fill="#3c3c3c"/></svg>
<svg class="i blur" style="left:10px;top:69.7px;" width="16" height="16" viewBox="0 0 16 16"><defs><linearGradient id="ns" x1="0" y1=".2" x2="1" y2=".8"><stop offset="0" stop-color="#ec5a86"/><stop offset=".25" stop-color="#f0a040"/><stop offset=".5" stop-color="#d4e43c"/><stop offset=".75" stop-color="#48c858"/><stop offset="1" stop-color="#3a86d8"/></linearGradient></defs><path d="M9.600 9.800l4.800 5" stroke="#2a6c8e" stroke-width="2.800" stroke-linecap="round"/><path d="M10 10.200l4.200 4.400" stroke="#5aa2c4" stroke-width="1" stroke-linecap="round"/><circle cx="6.400" cy="6.600" r="5" fill="url(#ns)" stroke="#5c5c5c" stroke-width="1.100"/><path d="M12.800 0l.7 1.800 1.900-.5-1 1.600 1.600 1.100-1.900.4.100 1.900-1.400-1.300-1.400 1.300.1-1.900-1.900-.4 1.600-1.100-1-1.600 1.900.5z" fill="#f3921e"/></svg>
<div class="t" style="left:42.6px;top:87.4px;font-size:10.10px;color:#1a1a1a;line-height:14px;height:14px;">材料適</div>
<div class="t" style="left:52.8px;top:99.4px;font-size:10.10px;color:#1a1a1a;line-height:14px;height:14px;transform:scaleX(0.990);">用</div>
<svg class="i blur" style="left:49.8px;top:69.7px;" width="16" height="16" viewBox="0 0 16 16"><g stroke="#2b2b2b" stroke-width="1.700"><path d="M5.800 2.600h9.700M5.800 8h9.700M5.800 13.400h9.700"/></g><circle cx="2.400" cy="2.600" r="1.700" fill="#fff" stroke="#777" stroke-width=".9"/><circle cx="2.400" cy="8" r="1.700" fill="#4aa6dc" stroke="#2a6f9c" stroke-width=".9"/><circle cx="2.400" cy="13.400" r="1.700" fill="#f2c21e" stroke="#b48a14" stroke-width=".9"/></svg>
<div class="t" style="left:93.9px;top:87.4px;font-size:10.10px;color:#1a1a1a;line-height:14px;height:14px;">拘束</div>
<div class="t" style="left:81.3px;top:99.4px;font-size:10.10px;color:#1a1a1a;line-height:14px;height:14px;transform:scaleX(1.008);">ｱﾄﾞﾊﾞｲｻﾞｰ</div>
<svg class="a" style="left:102.3px;top:121.8px" width="5" height="3" viewBox="0 0 10 6"><path d="M0 0H10L5 6Z" fill="#3c3c3c"/></svg>
<svg class="i blur" style="left:96px;top:69.7px;" width="16" height="16" viewBox="0 0 16 16"><path d="M2.600 5.400l4-3.500 3.600 1.300v2.900l3.600 1.400v3.800l-4.600 3-6.600-3.300z" fill="#dedede" stroke="#565656" stroke-width="1.200" stroke-linejoin="round"/><path d="M2.600 5.400l3.800 1.500 3.800-3.700" fill="none" stroke="#565656" stroke-width="1"/><path d="M6.400 6.900v3l3.200 1.500 4.200-3.900M9.600 11.400v2.900" fill="none" stroke="#565656" stroke-width="1"/><path d="M6.400 6.900l3.800-3.700v2.900l3.600 1.400-4.200 3.900-3.200-1.500z" fill="#f6f6f6" fill-opacity=".8"/><path d="M3 13.400l-1.600 2.200M5.200 14.400l-1.600 2.200M7.400 15.400l-1.400 1.800M1 12.400l-1.200 1.600" stroke="#3f9ad8" stroke-width="1.100"/></svg>
<div class="t" style="left:137.8px;top:87.4px;font-size:10.10px;color:#1a1a1a;line-height:14px;height:14px;">外部荷重</div>
<div class="t" style="left:135.3px;top:99.4px;font-size:10.10px;color:#1a1a1a;line-height:14px;height:14px;transform:scaleX(1.008);">ｱﾄﾞﾊﾞｲｻﾞｰ</div>
<svg class="a" style="left:156.3px;top:121.8px" width="5" height="3" viewBox="0 0 10 6"><path d="M0 0H10L5 6Z" fill="#3c3c3c"/></svg>
<svg class="i blur" style="left:150px;top:69.7px;" width="16" height="16" viewBox="0 0 16 16"><path d="M4 .4v9.800" stroke="#2a6d9e" stroke-width="2.600"/><path d="M.2 7L4 12.200 7.800 7z" fill="#2a6d9e"/><path d="M.2 14.400h7.800" stroke="#2b2b2b" stroke-width="1.700"/><path d="M10.700 10V2a1.400 1.400 0 0 1 2.800 0v8a3 3 0 1 1-2.800 0z" fill="#e8eef4" stroke="#2a5f88" stroke-width="1.100"/><circle cx="12.100" cy="12.600" r="2.300" fill="#3f9ad2"/><path d="M12.100 6v6" stroke="#3f9ad2" stroke-width="1.200"/></svg>
<div class="t" style="left:201.9px;top:87.4px;font-size:10.10px;color:#1a1a1a;line-height:14px;height:14px;">接続</div>
<div class="t" style="left:189.3px;top:99.4px;font-size:10.10px;color:#1a1a1a;line-height:14px;height:14px;transform:scaleX(1.008);">ｱﾄﾞﾊﾞｲｻﾞｰ</div>
<svg class="a" style="left:210.3px;top:121.8px" width="5" height="3" viewBox="0 0 10 6"><path d="M0 0H10L5 6Z" fill="#3c3c3c"/></svg>
<svg class="i blur" style="left:204px;top:69.7px;" width="16" height="16" viewBox="0 0 16 16"><path d="M1.800 3.600q0-2.600 4.200-2.600t4.200 2.600v1.600H1.800z" fill="#c4c4c4" stroke="#404040" stroke-width="1.200"/><path d="M4 5.200h4.200v9.200l-2.100 1.200-2.100-1.200z" fill="#dcdcdc" stroke="#404040" stroke-width="1.200"/><path d="M4 7.400h4.200M4 9.600h4.200M4 11.800h4.200" stroke="#404040" stroke-width="1"/><path d="M13.600 .4v15.200" stroke="#3f97d0" stroke-width="2"/><path d="M10.600 2h3M10.600 4.400h3M10.600 6.800h3M10.600 9.200h3M10.600 11.600h3M10.600 14h3" stroke="#6db4e0" stroke-width="1"/></svg>
<div class="t" style="left:251.2px;top:87.4px;font-size:10.10px;color:#1a1a1a;line-height:14px;height:14px;transform:scaleX(1.024);">ｼｪﾙ</div>
<div class="t" style="left:243.5px;top:99.4px;font-size:10.10px;color:#1a1a1a;line-height:14px;height:14px;transform:scaleX(1.021);">ﾏﾈｰｼﾞｬ</div>
<svg class="i blur" style="left:252.3px;top:69.7px;" width="16" height="16" viewBox="0 0 16 16"><path d="M1 5.400l6.400-3.800L15 4.400v5.800l-7.200 4.400L1 11.200z" fill="#3b9fd6"/><path d="M1 5.400l6.400-3.800L15 4.400 7.800 8.400z" fill="#8fd0f0"/><path d="M7.800 8.400L15 4.400v5.800l-7.200 4.400z" fill="#2a7fb4"/><path d="M1 7.300l6.800 3.100L15 6.300M1 9.300l6.800 3.100 7.200-4.200" stroke="#1e6a9a" stroke-width=".6" fill="none"/></svg>
<div class="t" style="left:285.3px;top:87.4px;font-size:10.10px;color:#1a1a1a;line-height:14px;height:14px;">診断</div>
<div class="t" style="left:286.1px;top:99.4px;font-size:10.10px;color:#1a1a1a;line-height:14px;height:14px;transform:scaleX(1.040);">ﾂｰﾙ</div>
<svg class="a" style="left:293.7px;top:121.8px" width="5" height="3" viewBox="0 0 10 6"><path d="M0 0H10L5 6Z" fill="#3c3c3c"/></svg>
<svg class="i blur" style="left:287.4px;top:69.7px;" width="16" height="16" viewBox="0 0 16 16"><path d="M9.600 9.800l5 5" stroke="#2b2b2b" stroke-width="2.400" stroke-linecap="round"/><circle cx="6.600" cy="6.400" r="5.200" fill="#f7f7f7" stroke="#3a3a3a" stroke-width="1.500"/><path d="M0 6.600h3.400l1.200-2.800 1.800 5.400 1.600-4 1 1.400h5.200" fill="none" stroke="#2f86c2" stroke-width="1.100"/></svg>
<div class="t" style="left:314.4px;top:87.4px;font-size:10.10px;color:#1a1a1a;line-height:14px;height:14px;transform:scaleX(0.909);">ｽﾀﾃﾞｨの</div>
<div class="t" style="left:321.0px;top:99.4px;font-size:10.10px;color:#1a1a1a;line-height:14px;height:14px;">実行</div>
<svg class="a" style="left:329.4px;top:121.8px" width="5" height="3" viewBox="0 0 10 6"><path d="M0 0H10L5 6Z" fill="#3c3c3c"/></svg>
<svg class="i blur" style="left:323.1px;top:69.7px;" width="16" height="16" viewBox="0 0 16 16"><path d="M.9 3L4.900 4.900V8.600L9.800 10.900V15.300L.9 11.100z" fill="url(#ctA)"/><path d="M.9 3L6.700 .7l3.800 1.700-5.600 2.500z" fill="#e01212"/><path d="M4.900 4.900l5.600-2.500V6L4.900 8.600z" fill="url(#ctB)"/><path d="M4.900 8.600L10.500 6l3.900 1.800-4.600 3.100z" fill="#34d41e"/><path d="M9.800 10.900l4.600-3.100v4.400l-4.600 3.100z" fill="url(#ctC)"/><path d="M.9 3L6.700 .7l3.800 1.700V6l3.900 1.800v4.400l-4.600 3.100L.9 11.100z" fill="none" stroke="#2a2a2a" stroke-width=".7" stroke-linejoin="round"/><path d="M4.900 4.900V8.600l4.900 2.300" fill="none" stroke="#1a3a10" stroke-opacity=".55" stroke-width=".6"/><path d="M11.200 1.100l4.400 2.100-4.400 2.100z" fill="#303030"/></svg>
<div class="t" style="left:371.1px;top:87.4px;font-size:10.10px;color:#1a1a1a;line-height:14px;height:14px;">結果</div>
<div class="t" style="left:358.5px;top:99.4px;font-size:10.10px;color:#1a1a1a;line-height:14px;height:14px;transform:scaleX(1.008);">ｱﾄﾞﾊﾞｲｻﾞｰ</div>
<svg class="a" style="left:379.5px;top:121.8px" width="5" height="3" viewBox="0 0 10 6"><path d="M0 0H10L5 6Z" fill="#3c3c3c"/></svg>
<svg class="i blur" style="left:373.2px;top:69.7px;" width="16" height="16" viewBox="0 0 16 16"><path d="M6.800 .8h5.200l2.800 2.700V12H6.800z" fill="#f6f6f6" stroke="#7a7a7a" stroke-width="1"/><path d="M8.200 4h4M8.200 6h4" stroke="#8a8a8a" stroke-width=".8"/><path d="M.8 7.200h3.600v3.200h4.200v5H.8z" fill="url(#rb)"/><circle cx="12.300" cy="8.400" r="1.900" fill="#1f6a96"/><path d="M9.200 15.400q0-4.400 3.100-4.400t3.100 4.400z" fill="#1f6a96"/></svg>
<div class="t" style="left:412.8px;top:87.4px;font-size:10.10px;color:#1a1a1a;line-height:14px;height:14px;">変形結</div>
<div class="t" style="left:423.0px;top:99.4px;font-size:10.10px;color:#1a1a1a;line-height:14px;height:14px;transform:scaleX(0.990);">果</div>
<svg class="i blur" style="left:420px;top:69.7px;" width="16" height="16" viewBox="0 0 16 16"><defs><linearGradient id="df" x1="0" x2="1"><stop offset="0" stop-color="#e8241a"/><stop offset=".3" stop-color="#f4d81e"/><stop offset=".6" stop-color="#36c22e"/><stop offset="1" stop-color="#1a6ad8"/></linearGradient></defs><path d="M1 4.200h13.800v3.600L13 9.800V6.600H1z" fill="#fdfdfd" stroke="#5a5a5a" stroke-width=".9"/><path d="M1.200 5q6.400-.6 10.200 1.800l1.400 2.600-2 1.400Q8.200 7.600 1.200 7.800z" fill="url(#df)"/></svg>
<div class="t" style="left:452.3px;top:87.4px;font-size:10.10px;color:#1a1a1a;line-height:14px;height:14px;">結果比</div>
<div class="t" style="left:462.5px;top:99.4px;font-size:10.10px;color:#1a1a1a;line-height:14px;height:14px;transform:scaleX(0.990);">較</div>
<svg class="i blur" style="left:459.5px;top:69.7px;" width="16" height="16" viewBox="0 0 16 16"><path d="M1.200 .8h5.400l2 2v8.400H1.200z" fill="#f4f4f4" stroke="#6e6e6e" stroke-width=".9"/><path d="M7.600 4.800h5.200l2 2v8.400H7.600z" fill="#f4f4f4" stroke="#6e6e6e" stroke-width=".9"/><rect x="2.400" y="3.600" width="4" height="4.600" fill="url(#rb)"/><rect x="10.600" y="9" width="3.400" height="4.800" fill="url(#rb)"/><path d="M2.200 9.600h4.400M2.200 11h3" stroke="#333" stroke-width=".9"/><path d="M6.400 9.200q0-1.600 1.600-1.600t1.600 1.500q0 1-1.500 1.500v1" fill="none" stroke="#2b8fd0" stroke-width="1.400"/><circle cx="8.100" cy="13.600" r=".9" fill="#2b8fd0"/></svg>
<svg class="i blur" style="left:490px;top:69.2px;" width="16" height="16" viewBox="0 0 16 16"><path d="M4.800 3.400l5.200-2.600 1.600 1v2.800l4 1.800v3.800l-5 3.400-4.600-1.400z" fill="#efefef" stroke="#3a3a3a" stroke-width="1" stroke-linejoin="round"/><path d="M3.200 3.400L9.800 .6l1.800 1.200-6.400 2.800z" fill="#2f7fb0" stroke="#1f5c84" stroke-width=".6"/><path d="M11.600 4.600L7.800 7v3.400M7.800 7l3 1.400 4.800-2" fill="none" stroke="#4a4a4a" stroke-width=".8"/><circle cx="5.600" cy="8.400" r="3.600" fill="#d2e6f5" stroke="#222" stroke-width="1.300"/><path d="M5 6.200a2.400 2.400 0 0 0-1.800 2.400" fill="none" stroke="#fff" stroke-width=".9"/><path d="M3 11.200L.4 14.600" stroke="#222" stroke-width="1.900" stroke-linecap="round"/></svg>
<svg class="i blur" style="left:490px;top:90.6px;" width="16" height="16" viewBox="0 0 16 16"><path d="M.4 2.800L4.800 .8l5.800 1.800v10.200l-5 2-5.200-2.400z" fill="#1d4e6e"/><path d="M1.300 3.600l3.300-1.400v9.600l-3.300-.6z" fill="url(#rb)"/><path d="M5.700 3l4 .8v7.800l-4 1.400z" fill="url(#rb)"/><path d="M1.300 11.800l3.300.6v1.200l-3.300-1zM5.700 12.800l4-1.400v1.200l-4 1.600z" fill="#f2f2f2"/><path d="M8.200 14.800L13.600 9.600" stroke="#2a7ab8" stroke-width="2.700" stroke-linecap="round"/><path d="M8 15l1.600-1.500" stroke="#1c4c74" stroke-width="2" stroke-linecap="round"/><circle cx="13.200" cy="9.800" r="1.900" fill="none" stroke="#6c7076" stroke-width="1"/></svg>
<div class="t" style="left:511.4px;top:70.7px;font-size:10.10px;color:#1a1a1a;line-height:14px;height:14px;transform:scaleX(0.992);">設計ｲﾝｻｲﾄ</div>
<div class="t" style="left:511.4px;top:93.2px;font-size:10.10px;color:#1a1a1a;line-height:14px;height:14px;transform:scaleX(0.993);">ﾌﾟﾛｯﾄ ﾂｰﾙ</div>
<svg class="a" style="left:573.5px;top:96.9px" width="5" height="3" viewBox="0 0 10 6"><path d="M0 0H10L5 6Z" fill="#3c3c3c"/></svg>
<svg class="i" style="left:667px;top:84.6px;" width="9" height="7" viewBox="0 0 9 7"><path d="M1 .7l3 2.800-3 2.800M5 .7l3 2.800-3 2.800" fill="none" stroke="#666" stroke-width="1"/></svg><svg class="i" style="left:667px;top:120.4px;" width="9.4" height="6" viewBox="0 0 9.4 6"><path d="M.8 5.200L4.700 1.300l3.900 3.900" fill="none" stroke="#2a2a2a" stroke-width="1.600"/></svg>
<div class="b" style="left:0px;top:134px;width:682px;height:20px;background:linear-gradient(to right,#f0f2f7 0,#e6e9f0 100%);"></div>
<div class="b" style="left:0px;top:134px;width:512px;height:19.9px;background:#d3d3d3;box-shadow:inset 0 1px 0 #b9b9b9, inset 0 -1px 0 #a8a8a8;"></div>
<div class="b" style="left:512px;top:134px;width:170px;height:1px;background:#c2c2c2;"></div>
<div class="b" style="left:47.6px;top:135px;width:1.2px;height:18.6px;background:#a9a9a9;"></div>
<div class="b" style="left:95.6px;top:135px;width:1.2px;height:18.6px;background:#a9a9a9;"></div>
<div class="b" style="left:146.9px;top:135px;width:1.2px;height:18.6px;background:#a9a9a9;"></div>
<div class="b" style="left:195.2px;top:135px;width:1.2px;height:18.6px;background:#a9a9a9;"></div>
<div class="b" style="left:280px;top:135px;width:1.2px;height:18.6px;background:#a9a9a9;"></div>
<div class="b" style="left:511px;top:135px;width:1.2px;height:18.6px;background:#a9a9a9;"></div>
<div class="b" style="left:387.7px;top:135px;width:60.7px;height:19.6px;background:#f7f7f7;box-shadow:-1px 0 0 #a9a9a9,1px 0 0 #a9a9a9;"></div>
<div class="t" style="left:6.5px;top:137.6px;font-size:10.10px;color:#262626;line-height:14px;height:14px;transform:scaleX(0.971);">ﾌｨｰﾁｬｰ</div>
<div class="t" style="left:60.7px;top:137.6px;font-size:10.10px;color:#262626;line-height:14px;height:14px;transform:scaleX(0.969);">ｽｹｯﾁ</div>
<div class="t" style="left:103.3px;top:137.6px;font-size:10.10px;color:#262626;line-height:14px;height:14px;transform:scaleX(0.968);">ﾏｰｸｱｯﾌﾟ</div>
<div class="t" style="left:161.1px;top:137.6px;font-size:10.10px;color:#262626;line-height:14px;height:14px;transform:scaleX(1.050);">評価</div>
<div class="t" style="left:203.0px;top:137.6px;font-size:10.10px;color:#262626;line-height:14px;height:14px;transform:scaleX(0.958);">MBD Dimension</div>
<div class="t" style="left:287.8px;top:137.6px;font-size:10.10px;color:#262626;line-height:14px;height:14px;transform:scaleX(0.951);">SOLIDWORKS ｱﾄﾞｲﾝ</div>
<div class="t" style="left:395.6px;top:137.6px;font-size:10.10px;color:#262626;line-height:14px;height:14px;transform:scaleX(0.982);">Simulation</div>
<div class="t" style="left:455.6px;top:137.6px;font-size:10.10px;color:#262626;line-height:14px;height:14px;transform:scaleX(0.978);">解析の準備</div>
<svg class="i" style="left:573px;top:142.6px;" width="10.6" height="11" viewBox="0 0 10.6 11"><rect x=".6" y=".6" width="9.400" height="9.800" fill="none" stroke="#9b9b9b" stroke-width="1.100"/><path d="M3 1v9" stroke="#9b9b9b" stroke-width=".8"/><path d="M7.600 3.300v4.600L4.600 5.600z" fill="#9b9b9b"/></svg><svg class="i" style="left:595px;top:142.6px;" width="10.6" height="11" viewBox="0 0 10.6 11"><rect x=".6" y=".6" width="9.400" height="9.800" fill="none" stroke="#9b9b9b" stroke-width="1.100"/><path d="M7.600 1v9" stroke="#9b9b9b" stroke-width=".8"/><path d="M3 3.300v4.600l3-2.300z" fill="#9b9b9b"/></svg><div class="b" style="left:618.500px;top:150.500px;width:8.600px;height:1.500px;background:#a2a2a2"></div><svg class="i" style="left:639.2px;top:141.6px;" width="12.6" height="11.6" viewBox="0 0 12.6 11.6"><path d="M3.600 3.400V.6h8.400v7h-2.800" fill="none" stroke="#9b9b9b" stroke-width="1.100"/><rect x=".6" y="3.400" width="8.600" height="7.600" fill="none" stroke="#9b9b9b" stroke-width="1.100"/></svg><svg class="i" style="left:663px;top:143.2px;" width="9" height="9.4" viewBox="0 0 9 9.4"><path d="M.5.5l8 8.400M8.500.5l-8 8.400" stroke="#a4a4a4" stroke-width="1.100" fill="none"/></svg>
<div class="b" id="vp" style="left:204px;top:153.800px;width:478px;height:341.400px;background:radial-gradient(ellipse 300px 150px at 40px 10px,#fff 0,rgba(255,255,255,.85) 35%,rgba(255,255,255,0) 100%),radial-gradient(ellipse 260px 90px at 120px 180px,rgba(214,217,226,.55) 0,rgba(214,217,226,0) 100%),linear-gradient(to bottom,#e7e9f0 0,#e2e5ec 38%,#e6e8ee 52%,#f1f2f5 66%,#fbfbfc 80%,#fff 100%)"></div>
<svg class="i blur" style="left:204px;top:153px" width="478" height="342" viewBox="204 153 478 342"><use href="#beam"/></svg>
<div class="t" style="left:216.0px;top:160.0px;font-size:10.10px;color:#141414;line-height:14px;height:14px;transform:scaleX(1.033);">ﾓﾃﾞﾙ名: cae</div>
<div class="t" style="left:216.0px;top:172.0px;font-size:10.10px;color:#141414;line-height:14px;height:14px;transform:scaleX(1.008);">ｽﾀﾃﾞｨ名: 静解析 1(-ﾃﾞﾌｫﾙﾄ-)</div>
<div class="t" style="left:216.0px;top:184.0px;font-size:10.10px;color:#141414;line-height:14px;height:14px;transform:scaleX(0.981);">表示ﾀｲﾌﾟ: 静ひずみ ひずみ1</div>
<div class="t" style="left:216.0px;top:196.0px;font-size:10.10px;color:#141414;line-height:14px;height:14px;transform:scaleX(1.075);">変形ｽｹｰﾙ: 8.13811</div>
<svg class="i blur" style="left:307px;top:164.2px;opacity:0.92;" width="15" height="15" viewBox="0 0 16 16"><circle cx="7" cy="6.600" r="5.200" fill="#f4f6f9" stroke="#8e9096" stroke-width="1.200"/><path d="M3.400 10.400L-.6 14.400" stroke="#3a8ad0" stroke-width="2.200"/><g fill="#8a8c92"><circle cx="5" cy="4.600" r=".9"/><circle cx="9" cy="4.600" r=".9"/><circle cx="5" cy="8.600" r=".9"/><circle cx="9" cy="8.600" r=".9"/></g></svg>
<svg class="i blur" style="left:328.6px;top:164.2px;opacity:0.92;" width="15" height="15" viewBox="0 0 16 16"><rect x="1" y=".8" width="10.600" height="10" fill="none" stroke="#7c7e84" stroke-width="1" stroke-dasharray="2.400 1.800"/><circle cx="7.600" cy="7.400" r="5" fill="#eef1f5" stroke="#a2a4aa" stroke-width="1.200"/><path d="M4 11.200L.2 15" stroke="#3a8ad0" stroke-width="2.200"/></svg>
<svg class="i blur" style="left:349px;top:164.4px;" width="16" height="15" viewBox="0 0 16 16"><path d="M1 9.600L10.600 1.400l4 4.200-9.400 8.400z" fill="#eceef1" stroke="#8a8c92" stroke-width="1.100"/><path d="M1 9.600q1.800-1.200 3.200.8t1 3.600" fill="#d8dade" stroke="#8a8c92" stroke-width=".9"/><path d="M15.600 10.400h-5" stroke="#2f86c2" stroke-width="1.800"/><path d="M11.400 7.200v6.400l-4.200-3.200z" fill="#2f86c2"/></svg>
<svg class="i blur" style="left:371px;top:164.6px;" width="16" height="16" viewBox="0 0 16 16"><path d="M.8 4.400q3.600-3 7.200-1.200v10.400q-3.600-1.400-7.200 1z" fill="#4a9ed6" stroke="#2c6f9e" stroke-width=".9"/><path d="M1.800 6l5 4M1.800 8.600l5 4M1.800 11.200l3.400 2.800M3.600 4l3.600 2.800" stroke="#bfe0f4" stroke-width=".7"/><path d="M8 3.200q3.800-2.400 7.200-.4v9.800q-1.200-.8-2.400-.6v-5.600q-1.200-.6-2.400.2v6.400l-2.400.6z" fill="#d8dade" stroke="#6c6e74" stroke-width=".9"/><path d="M13 6.200q1.200-.4 2.200.2v6q-1-.8-2.200-.4z" fill="#4a9ed6"/></svg>
<svg class="i blur" style="left:393px;top:164.6px;" width="16" height="16" viewBox="0 0 16 16"><path d="M1 5.600l4.600-4.400h9.800v9.400l-4.600 4.600H1z" fill="#f2f4f7" stroke="#6c6e74" stroke-width=".9"/><path d="M5.600 1.200v9.400h9.800M5.600 10.600L1 15.200M10.800 5.600l4.600-4.400" fill="none" stroke="#6c6e74" stroke-width=".8"/><rect x="1" y="5.600" width="9.800" height="9.600" fill="#84c4e6" stroke="#3a5c74" stroke-width=".9"/></svg>
<svg class="i blur" style="left:427.6px;top:164.6px;" width="16" height="16.4" viewBox="0 0 16 16"><path d="M1.600 3.400L8.600 1l5.800 2v9.800l-6.400 2.600-6.400-2.600z" fill="#fff" stroke="#5f6268" stroke-width="1"/><path d="M1.600 3.400L8 5.400v10L1.600 12.800z" fill="#86c6e8"/><path d="M1.600 3.400L8.600 1l5.800 2L8 5.400z" fill="#c6e6f5"/><path d="M1.600 3.400L8 5.400l6.400-2.400M8 5.400v10" fill="none" stroke="#5f6268" stroke-width=".9"/></svg>
<svg class="i blur" style="left:462px;top:166px;" width="16" height="15" viewBox="0 0 16 16"><path d="M.6 8q7.400-8.400 14.800 0-7.400 8.400-14.800 0z" fill="#e9ebee" stroke="#96989e" stroke-width="1.100"/><circle cx="8" cy="7.600" r="3.300" fill="#6c6e74"/><path d="M8 4v10" stroke="#5c5e64" stroke-width="1.400"/></svg>
<svg class="i blur" style="left:496px;top:164.6px;" width="16.6" height="17" viewBox="0 0 16.6 17"><circle cx="7" cy="7" r="6.400" fill="#3f8ee0"/><path d="M7 7L8.200 .7A6.400 6.400 0 0 1 13.300 8z" fill="#e2483a"/><path d="M7 7l6.300 1A6.400 6.400 0 0 1 5.800 13.300z" fill="#f0c030"/><path d="M7 7L5.800 13.300A6.400 6.400 0 0 1 .7 6z" fill="#42b446"/><circle cx="5.200" cy="4.400" r="2.800" fill="#fff" fill-opacity=".25"/><path d="M12.600 7.200l2.400 2.200-6 6.200-3 1 .8-3z" fill="#f0c83a" stroke="#6b5a20" stroke-width=".7"/><path d="M12.600 7.200l1-1q.6-.4 1.200.1l.9.900q.4.600-.1 1.100l-.6 1.100z" fill="#d8362a"/><path d="M6.800 13.600l-.8 3 3-1z" fill="#333"/></svg>
<svg class="i blur" style="left:517.4px;top:164.6px;" width="16.6" height="16.6" viewBox="0 0 16.6 16.6"><circle cx="7" cy="6.4" r="6.400" fill="#3f8ee0"/><path d="M7 6.400L8.200 .7A6.400 6.400 0 0 1 13.300 8z" fill="#e2483a"/><path d="M7 6.400l6.300 1A6.400 6.400 0 0 1 5.800 13.300z" fill="#f0c030"/><path d="M7 6.400L5.800 13.300A6.400 6.400 0 0 1 .7 6z" fill="#42b446"/><circle cx="5.200" cy="4.400" r="2.800" fill="#fff" fill-opacity=".25"/><path d="M.4 16.200l1-5.200h13.200l1 5.200z" fill="#f6f6f6" stroke="#333" stroke-width=".7"/><path d="M1.400 11h3.300v2.400H1zM8 11h3.300v2.400H8zM4.700 13.400H8v2.800H4.700zM11.300 13.400h3.800l.5 2.800h-4.300z" fill="#2e2e2e"/><path d="M3.200 11q3.800 2.400 7.600 0" fill="#42b446"/><path d="M7.400 11.900q2.400-.2 3.600-.9H7.200z" fill="#f0c030"/></svg>
<svg class="i blur" style="left:552px;top:166px;" width="16.4" height="15" viewBox="0 0 16 16"><rect x=".8" y="1" width="14.600" height="9.800" fill="#e6e8eb" stroke="#8a8c92" stroke-width="1.300"/><path d="M8 11v3" stroke="#6c6e74" stroke-width="1.800"/><path d="M4.600 14.600h7" stroke="#5c5e64" stroke-width="1.500"/></svg>
<svg class="a" style="left:415.7px;top:172.100px" width="4.600" height="2.800" viewBox="0 0 10 6"><path d="M0 0H10L5 6Z" fill="#96989e"/></svg>
<svg class="a" style="left:449.7px;top:172.100px" width="4.600" height="2.800" viewBox="0 0 10 6"><path d="M0 0H10L5 6Z" fill="#96989e"/></svg>
<svg class="a" style="left:483.7px;top:172.100px" width="4.600" height="2.800" viewBox="0 0 10 6"><path d="M0 0H10L5 6Z" fill="#96989e"/></svg>
<svg class="a" style="left:540.1px;top:172.100px" width="4.600" height="2.800" viewBox="0 0 10 6"><path d="M0 0H10L5 6Z" fill="#96989e"/></svg>
<svg class="a" style="left:574.3px;top:172.100px" width="4.600" height="2.800" viewBox="0 0 10 6"><path d="M0 0H10L5 6Z" fill="#96989e"/></svg>
<svg class="i blur" style="left:220px;top:410px;" width="50" height="54" viewBox="0 0 50 54"><path d="M18.800 35V14" stroke="#127a18" stroke-width="2.600"/><path d="M15.400 16.400l3.400-6 3.400 6z" fill="#127a18"/><path d="M18.800 35l-8.400 7" stroke="#14149c" stroke-width="3.400"/><circle cx="10" cy="42.600" r="2.900" fill="#1616c0"/><path d="M18.800 35l16.400 4" stroke="#c81c1c" stroke-width="2.800"/><path d="M33.600 35.400l7.800 4.800-8.800 2.200z" fill="#e84040"/><path d="M15.600 2.600l2.400 3.200 2.400-3.200M18 5.800v3.600" fill="none" stroke="#239a2a" stroke-width="1.100"/><path d="M41 37.400l4.600 6.800M45.600 37.400L41 44.200" stroke="#f03c3c" stroke-width="1.100"/><path d="M2 44.800h4.600l-4.800 6.400h4.800" fill="none" stroke="#3030f0" stroke-width="1.100"/></svg>
<div class="t" style="left:214.4px;top:479.1px;font-size:11.00px;color:#111;line-height:14px;height:14px;font-weight:bold;">*</div>
<div class="t" style="left:220.4px;top:478.9px;font-size:12.30px;color:#111;line-height:14px;height:14px;font-weight:bold;transform:scaleX(1.018);">不等角投影</div>
<div class="t" style="left:587.9px;top:196.4px;font-size:11.00px;color:#1c1c1c;line-height:14px;height:14px;transform:scaleX(0.864);">ESTRN</div>
<div class="b" style="left:588.500px;top:230.800px;width:17.500px;height:238.600px;background:linear-gradient(to bottom,#ff0000 0,#ff1e00 4%,#ff9800 15%,#ffff00 27%,#8cff00 38%,#00ff00 50%,#00ff8c 62%,#00ffff 75%,#0090ff 86%,#0000ff 97%,#0000ff 100%)"></div>
<div class="b" style="left:588.500px;top:230.200px;width:18.800px;height:1.100px;background:#2a2a2a"></div>
<div class="t" style="left:613.7px;top:220.4px;font-size:11.00px;color:#1c1c1c;line-height:14px;height:14px;transform:scaleX(0.993);">7.574e-04</div>
<div class="t" style="left:613.7px;top:244.2px;font-size:11.00px;color:#1c1c1c;line-height:14px;height:14px;transform:scaleX(0.993);">6.819e-04</div>
<div class="b" style="left:606.200px;top:254.4px;width:1.200px;height:1.400px;background:#333"></div>
<div class="t" style="left:613.7px;top:268.1px;font-size:11.00px;color:#1c1c1c;line-height:14px;height:14px;transform:scaleX(0.993);">6.065e-04</div>
<div class="b" style="left:606.200px;top:278.3px;width:1.200px;height:1.400px;background:#333"></div>
<div class="t" style="left:613.7px;top:291.9px;font-size:11.00px;color:#1c1c1c;line-height:14px;height:14px;transform:scaleX(0.993);">5.310e-04</div>
<div class="b" style="left:606.200px;top:302.1px;width:1.200px;height:1.400px;background:#333"></div>
<div class="t" style="left:613.7px;top:315.8px;font-size:11.00px;color:#1c1c1c;line-height:14px;height:14px;transform:scaleX(0.993);">4.555e-04</div>
<div class="b" style="left:606.200px;top:326.0px;width:1.200px;height:1.400px;background:#333"></div>
<div class="t" style="left:613.7px;top:339.6px;font-size:11.00px;color:#1c1c1c;line-height:14px;height:14px;transform:scaleX(0.993);">3.800e-04</div>
<div class="b" style="left:606.200px;top:349.8px;width:1.200px;height:1.400px;background:#333"></div>
<div class="t" style="left:613.7px;top:363.5px;font-size:11.00px;color:#1c1c1c;line-height:14px;height:14px;transform:scaleX(0.993);">3.045e-04</div>
<div class="b" style="left:606.200px;top:373.7px;width:1.200px;height:1.400px;background:#333"></div>
<div class="t" style="left:613.7px;top:387.3px;font-size:11.00px;color:#1c1c1c;line-height:14px;height:14px;transform:scaleX(0.993);">2.290e-04</div>
<div class="b" style="left:606.200px;top:397.5px;width:1.200px;height:1.400px;background:#333"></div>
<div class="t" style="left:613.7px;top:411.2px;font-size:11.00px;color:#1c1c1c;line-height:14px;height:14px;transform:scaleX(0.993);">1.535e-04</div>
<div class="b" style="left:606.200px;top:421.4px;width:1.200px;height:1.400px;background:#333"></div>
<div class="t" style="left:613.7px;top:435.0px;font-size:11.00px;color:#1c1c1c;line-height:14px;height:14px;transform:scaleX(0.993);">7.805e-05</div>
<div class="b" style="left:606.200px;top:445.2px;width:1.200px;height:1.400px;background:#333"></div>
<div class="t" style="left:613.7px;top:458.9px;font-size:11.00px;color:#1c1c1c;line-height:14px;height:14px;transform:scaleX(0.993);">2.566e-06</div>
<div class="b" style="left:606.200px;top:469.1px;width:1.200px;height:1.400px;background:#333"></div>
<div class="b" style="left:661.300px;top:178.500px;width:21px;height:122.600px;background:#d3d3d3;box-shadow:inset 1px 0 0 #a4a4a4,inset 0 1px 0 #a4a4a4,inset 0 -1px 0 #a4a4a4"></div>
<div class="b" style="left:662.300px;top:179.500px;width:20px;height:19px;background:#fdfdfd"></div>
<svg class="i blur" style="left:664.2px;top:181.1px;" width="15.6" height="15.6" viewBox="0 0 16 16"><path d="M1 8L8 1.600 15 8" fill="none" stroke="#2a6da0" stroke-width="2"/><path d="M3.200 7.600V14.800h9.600V7.600" fill="#fff" stroke="#555" stroke-width="1.100"/><rect x="6.400" y="9.600" width="3.200" height="5.200" fill="#fff" stroke="#555" stroke-width="1"/></svg>
<div class="b" style="left:661.300px;top:198.9px;width:21px;height:1px;background:#a9a9a9"></div>
<svg class="i blur" style="left:664.2px;top:201.53px;" width="15.6" height="15.6" viewBox="0 0 16 16"><path d="M2 4.400l3-2.200 2.200 1 2-1.400 2.200 1 1.800-1L14.600 3v9.400l-3.200 2.800-2.200-.8-2 1-2.200-.8-1 .6-2-1.200z" fill="#e4e4e4" stroke="#4a4a4a" stroke-width="1.100" stroke-linejoin="round"/><path d="M5 5.600v9M7.200 3.400v11M9.200 5.200v9.200M11.400 3v11.200M5 5.600l2.200-2.200M9.200 5.200l2.200-2.200" fill="none" stroke="#4a4a4a" stroke-width=".9"/></svg>
<div class="b" style="left:661.300px;top:219.4px;width:21px;height:1px;background:#a9a9a9"></div>
<svg class="i blur" style="left:664.2px;top:221.96px;" width="15.6" height="15.6" viewBox="0 0 16 16"><path d="M1 13.600V2.400h5l1.400 1.800H13v2.200" fill="#f4f4f4" stroke="#555" stroke-width="1.100"/><path d="M1 13.600L4 6.400h11.600l-3 7.200z" fill="#fff" stroke="#555" stroke-width="1.100"/></svg>
<div class="b" style="left:661.300px;top:239.8px;width:21px;height:1px;background:#a9a9a9"></div>
<svg class="i blur" style="left:664.2px;top:242.39px;" width="15.6" height="15.6" viewBox="0 0 16 16"><rect x=".8" y="1.600" width="14.400" height="12.800" rx="1" fill="#5e5e5e"/><path d="M3 4h6v2.400H7.200v2.200H9l1.400 3.400H2l1.400-3.400h1.400V6.400H3z" fill="#f2c21e"/><rect x="11" y="3.600" width="3" height="3" fill="#f2c21e"/><rect x="11.600" y="8.400" width="2" height="4.400" fill="#f2c21e"/></svg>
<div class="b" style="left:661.300px;top:260.2px;width:21px;height:1px;background:#a9a9a9"></div>
<svg class="i blur" style="left:664.2px;top:262.82px;" width="15.6" height="15.6" viewBox="0 0 16 16"><g transform="translate(.6 .8) scale(1.06)"><circle cx="7" cy="7" r="6.400" fill="#3f8ee0"/><path d="M7 7L8.200 .7A6.400 6.400 0 0 1 13.300 8z" fill="#e2483a"/><path d="M7 7l6.300 1A6.400 6.400 0 0 1 5.800 13.300z" fill="#f0c030"/><path d="M7 7L5.800 13.300A6.400 6.400 0 0 1 .7 6z" fill="#42b446"/><circle cx="5.200" cy="4.400" r="2.800" fill="#fff" fill-opacity=".25"/></g></svg>
<div class="b" style="left:661.300px;top:280.6px;width:21px;height:1px;background:#a9a9a9"></div>
<svg class="i blur" style="left:664.2px;top:283.25px;" width="15.6" height="15.6" viewBox="0 0 16 16"><rect x="1" y="1.400" width="14" height="13.200" fill="#f4f8fb" stroke="#2a5f88" stroke-width="1.100"/><rect x="1" y="1.400" width="14" height="2.800" fill="#2d7fb6"/><path d="M6 6.800h7.400M6 9.600h7.400M6 12.400h7.400" stroke="#444" stroke-width="1.100"/><g fill="#2d7fb6"><rect x="2.600" y="5.800" width="2.200" height="2"/><rect x="2.600" y="8.600" width="2.200" height="2"/><rect x="2.600" y="11.400" width="2.200" height="2"/></g></svg>
<div class="b" style="left:203.400px;top:297.300px;width:6.400px;height:32.600px;background:#f3f3f3;box-shadow:inset -1px 0 0 #b3b3b3,inset 0 1px 0 #b3b3b3,inset 0 -1px 0 #b3b3b3"></div>
<div class="b" style="left:204.400px;top:312.200px;width:3px;height:3px;border-radius:50%;border:.8px solid #9a9a9a;box-sizing:border-box"></div>
<div class="b" style="left:0px;top:153.4px;width:203.4px;height:341.6px;background:#f8f8f8;"></div>
<div class="b" style="left:203px;top:153.4px;width:1.2px;height:341.6px;background:#a6a6a6;"></div>
<div class="b" style="left:204.2px;top:153.4px;width:2.4px;height:341.6px;background:#fdfdfd;"></div>
<div class="b" style="left:0px;top:154.6px;width:201px;height:1px;background:#c5dbe2;"></div>
<div class="b" style="left:0px;top:171.2px;width:201px;height:1px;background:#d2d2d2;"></div>
<div class="b" style="left:98.300px;top:163.1px;width:4.200px;height:4.200px;border-radius:50%;border:1px solid #a9a9a9;box-sizing:border-box"></div>
<div class="b" style="left:98.300px;top:245.0px;width:4.200px;height:4.200px;border-radius:50%;border:1px solid #a9a9a9;box-sizing:border-box"></div>
<div class="b" style="left:33.7px;top:175.3px;width:137.3px;height:22px;background:#d2d2d2;box-shadow:inset 0 1px 0 #a9a9a9,inset -1px 0 0 #a9a9a9,inset 0 -1px 0 #a9a9a9;"></div>
<div class="b" style="left:33.2px;top:175.3px;width:1.1px;height:22px;background:#a9a9a9;"></div>
<div class="b" style="left:67.7px;top:175.3px;width:1.1px;height:22px;background:#a9a9a9;"></div>
<div class="b" style="left:101.8px;top:175.3px;width:1.1px;height:22px;background:#a9a9a9;"></div>
<div class="b" style="left:136px;top:175.3px;width:1.1px;height:22px;background:#a9a9a9;"></div>
<div class="b" style="left:0px;top:175.3px;width:33.4px;height:23px;background:#fdfdfd;box-shadow:inset 0 1px 0 #c9c9c9;"></div>
<svg class="i blur" style="left:9.5px;top:178.3px;" width="17" height="16" viewBox="0 0 17 16"><path d="M1 5.400L5.600 2l3.800 1.600v3.600l6 2.600v3.400l-4 2.800-10.400-5z" fill="#f2c81e" stroke="#a8800a" stroke-width="1"/><path d="M1 5.400l4.200 2 4.200-3.800M5.200 7.400v3.200l6 3v2.200M5.400 10.600l4-3.400" fill="none" stroke="#a8800a" stroke-width=".9"/><path d="M1 5.400L5.600 2l3.800 1.600-4.200 3.800z" fill="#fae27a"/></svg>
<svg class="i blur" style="left:43.4px;top:178.7px;" width="15.6" height="15.6" viewBox="0 0 16 16"><rect x="1" y="1.400" width="14" height="13.200" fill="#f4f8fb" stroke="#2a5f88" stroke-width="1.100"/><rect x="1" y="1.400" width="14" height="2.800" fill="#2d7fb6"/><path d="M6 6.800h7.400M6 9.600h7.400M6 12.400h7.400" stroke="#444" stroke-width="1.100"/><g fill="#2d7fb6"><rect x="2.600" y="5.800" width="2.200" height="2"/><rect x="2.600" y="8.600" width="2.200" height="2"/><rect x="2.600" y="11.400" width="2.200" height="2"/></g></svg>
<svg class="i blur" style="left:78px;top:178.5px;" width="14.4" height="16" viewBox="0 0 14.4 16"><path d="M1.800 1h3.400M1.800 15h3.400M1.800 1v14" fill="none" stroke="#606060" stroke-width="1.400"/><rect x="5.600" y="1.200" width="4.400" height="4.400" fill="#f4f4f4" stroke="#555" stroke-width="1.100"/><circle cx="8" cy="9.400" r="2.500" fill="#f4f4f4" stroke="#555" stroke-width="1.100"/><rect x="9" y="11.200" width="4.600" height="4" rx="1" fill="#fff" stroke="#555" stroke-width="1.100"/><path d="M5.200 3.400H3.400v8.800h3" fill="none" stroke="#606060" stroke-width="1"/></svg>
<svg class="i blur" style="left:111.7px;top:178.7px;" width="15.6" height="15.6" viewBox="0 0 15.6 15.6"><circle cx="7.800" cy="7.800" r="4.800" fill="none" stroke="#161616" stroke-width="1.600"/><path d="M7.800 0v15.600M0 7.800h15.600" stroke="#161616" stroke-width="1.500"/></svg>
<svg class="i blur" style="left:145.4px;top:178px;" width="16.4" height="16.4" viewBox="0 0 16.4 16.4"><g transform="translate(.2 .2) scale(1.143)"><circle cx="7" cy="7" r="6.400" fill="#3f8ee0"/><path d="M7 7L8.200 .7A6.400 6.400 0 0 1 13.300 8z" fill="#e2483a"/><path d="M7 7l6.300 1A6.400 6.400 0 0 1 5.800 13.300z" fill="#f0c030"/><path d="M7 7L5.800 13.300A6.400 6.400 0 0 1 .7 6z" fill="#42b446"/><circle cx="5.200" cy="4.400" r="2.800" fill="#fff" fill-opacity=".25"/></g><ellipse cx="11.200" cy="4.800" rx="1.900" ry="4.300" transform="rotate(-38 11.200 4.800)" fill="#161616"/><circle cx="8.200" cy="8.200" r="7.500" fill="none" stroke="#5a3a2a" stroke-opacity=".35" stroke-width=".8"/></svg>
<svg class="i" style="left:190.6px;top:181.8px;" width="6" height="8.6" viewBox="0 0 6 8.6"><path d="M1 .8l4 3.500-4 3.500" fill="none" stroke="#333" stroke-width="1.500"/></svg>
<div class="b" style="left:2.5px;top:198px;width:198px;height:21.1px;background:#fafafa;box-shadow:inset 0 0 0 1px #c2c2c2;"></div>
<div class="b" style="left:2.5px;top:254.4px;width:196.3px;height:21px;background:#fafafa;box-shadow:inset 0 0 0 1px #c2c2c2;"></div>
<svg class="i blur" style="left:5px;top:201.2px;" width="15" height="15.6" viewBox="0 0 15 15.6"><path d="M.8 1.600q6.600-2.400 13.200 0L9 8.200v6.600l-3.200-1.600v-5z" fill="#f2f2f2" stroke="#606060" stroke-width="1"/><path d="M.8 1.600q6.600-2.400 13.200 0-6.600 2.600-13.200 0z" fill="#3f9ad2" stroke="#2a6d9e" stroke-width="1"/></svg>
<svg class="i blur" style="left:4.4px;top:257px;" width="15" height="15.6" viewBox="0 0 15 15.6"><path d="M.8 1.600q6.600-2.400 13.200 0L9 8.200v6.600l-3.200-1.600v-5z" fill="#f2f2f2" stroke="#606060" stroke-width="1"/><path d="M.8 1.600q6.600-2.400 13.200 0-6.600 2.600-13.200 0z" fill="#3f9ad2" stroke="#2a6d9e" stroke-width="1"/></svg>
<svg class="a" style="left:19.6px;top:268px" width="4" height="2.4" viewBox="0 0 10 6"><path d="M0 0H10L5 6Z" fill="#333"/></svg>
<div class="b" style="left:2.5px;top:220.4px;width:187px;height:1.4px;background:#fdfdfd;"></div>
<div class="b" style="left:26px;top:221px;width:8px;height:1.600px;border-top:1px solid #999;border-radius:4px 4px 0 0"></div>
<div class="b" style="left:0px;top:223.3px;width:200.5px;height:14px;background:#f1f1f1;"></div>
<div class="b" style="left:14px;top:223.3px;width:130.6px;height:14px;background:#c9c9c9;"></div>
<svg class="i" style="left:3.8px;top:226.3px;" width="5" height="8" viewBox="0 0 5 8"><path d="M4.200 .8L1 4l3.200 3.200" fill="none" stroke="#444" stroke-width="1.300"/></svg>
<svg class="i" style="left:179.4px;top:226.3px;" width="5" height="8" viewBox="0 0 5 8"><path d="M.8 .8L4 4 .8 7.200" fill="none" stroke="#444" stroke-width="1.300"/></svg>
<div class="b" style="left:0px;top:239.4px;width:201px;height:1.6px;background:#c9c9c9;"></div>
<div class="b" style="left:0px;top:252.4px;width:201px;height:1px;background:#d0d0d0;"></div>
<div class="b" style="left:189px;top:276px;width:11.6px;height:218px;background:#f0f0f0;"></div>
<div class="b" style="left:189px;top:328.5px;width:11.6px;height:137px;background:#c9c9c9;"></div>
<svg class="i" style="left:191.4px;top:281.6px;" width="7" height="5" viewBox="0 0 7 5"><path d="M.6 4.400L3.500 1l2.900 3.400" fill="none" stroke="#444" stroke-width="1.300"/></svg>
<svg class="i" style="left:191.4px;top:483.8px;" width="7" height="5" viewBox="0 0 7 5"><path d="M.6 .6L3.500 4l2.900-3.400" fill="none" stroke="#555" stroke-width="1.200"/></svg>
<svg class="a" style="left:4.4px;top:283.3px" width="6.4" height="3.6" viewBox="0 0 10 6"><path d="M0 0H10L5 6Z" fill="#686868"/></svg>
<svg class="i blur" style="left:20.4px;top:277.5px;" width="16" height="16" viewBox="0 0 16 16"><path d="M2.600 5.400l4-3.500 3.600 1.300v2.900l3.600 1.400v3.800l-4.600 3-6.600-3.300z" fill="#dedede" stroke="#565656" stroke-width="1.200" stroke-linejoin="round"/><path d="M2.600 5.400l3.800 1.500 3.800-3.700" fill="none" stroke="#565656" stroke-width="1"/><path d="M6.400 6.900v3l3.200 1.500 4.200-3.900M9.600 11.400v2.900" fill="none" stroke="#565656" stroke-width="1"/><path d="M6.400 6.900l3.800-3.700v2.900l3.600 1.400-4.200 3.900-3.200-1.500z" fill="#f6f6f6" fill-opacity=".8"/><path d="M3 13.400l-1.600 2.200M5.200 14.400l-1.600 2.200M7.400 15.400l-1.400 1.800M1 12.400l-1.200 1.600" stroke="#3f9ad8" stroke-width="1.100"/></svg>
<div class="t" style="left:40.4px;top:279.0px;font-size:10.10px;color:#141414;line-height:14px;height:14px;transform:scaleX(0.960);">拘束</div>
<svg class="i blur" style="left:40.4px;top:297px;" width="16" height="16" viewBox="0 0 16 16"><g fill="none" stroke="#2a6da0" stroke-width="2.100" stroke-linecap="round"><path d="M11.400 3.600L5 10.600"/><path d="M1.400 7.400q-.6 6 5.400 7.400 3.400.2 5.400-2.400"/><path d="M1 10.200l.4-3.200 2.800 1.200"/></g><circle cx="12.600" cy="2.600" r="1.900" fill="#fff" stroke="#2a6da0" stroke-width="1.400"/></svg>
<div class="t" style="left:59.8px;top:298.5px;font-size:10.10px;color:#141414;line-height:14px;height:14px;transform:scaleX(1.004);">固定-1</div>
<svg class="a" style="left:4.4px;top:321.8px" width="6.4" height="3.6" viewBox="0 0 10 6"><path d="M0 0H10L5 6Z" fill="#686868"/></svg>
<svg class="i blur" style="left:20.4px;top:316px;" width="16" height="16" viewBox="0 0 16 16"><path d="M4 .4v9.800" stroke="#2a6d9e" stroke-width="2.600"/><path d="M.2 7L4 12.200 7.800 7z" fill="#2a6d9e"/><path d="M.2 14.400h7.800" stroke="#2b2b2b" stroke-width="1.700"/><path d="M10.700 10V2a1.400 1.400 0 0 1 2.800 0v8a3 3 0 1 1-2.800 0z" fill="#e8eef4" stroke="#2a5f88" stroke-width="1.100"/><circle cx="12.100" cy="12.600" r="2.300" fill="#3f9ad2"/><path d="M12.100 6v6" stroke="#3f9ad2" stroke-width="1.200"/></svg>
<div class="t" style="left:40.4px;top:317.5px;font-size:10.10px;color:#141414;line-height:14px;height:14px;transform:scaleX(0.993);">外部荷重</div>
<svg class="i blur" style="left:40.4px;top:334.6px;" width="16" height="16" viewBox="0 0 16 16"><path d="M8 .2v10" stroke="#2a6d9e" stroke-width="2.500"/><path d="M3.800 7.400L8 13.200l4.200-5.800z" fill="#2a6d9e"/><path d="M1 15.200h14" stroke="#2b2b2b" stroke-width="1.600"/></svg>
<div class="t" style="left:59.8px;top:336.1px;font-size:10.10px;color:#141414;line-height:14px;height:14px;transform:scaleX(1.079);">力-1 (:ｱｲﾃﾑ毎: 100 N:)</div>
<svg class="a" style="left:4.4px;top:359px" width="6.4" height="3.6" viewBox="0 0 10 6"><path d="M0 0H10L5 6Z" fill="#686868"/></svg>
<svg class="i blur" style="left:20.4px;top:353.2px;" width="16" height="16" viewBox="0 0 16 16"><path d="M1.200 7.600l5.400-3 8 2.600v4.400l-6 3.800-7.400-3.400z" fill="#c9c9c9" stroke="#505050" stroke-width="1.200" stroke-linejoin="round"/><path d="M1.200 7.600l7.400 3.200 6-3.600z" fill="#e4e4e4"/><path d="M1.200 7.600l7.400 3.200 6-3.600M8.600 10.800v4.600" fill="none" stroke="#505050" stroke-width="1"/><path d="M6 4.200l2.600 3L14.800.4" fill="none" stroke="#168a24" stroke-width="2.500"/></svg>
<div class="t" style="left:40.4px;top:354.7px;font-size:10.10px;color:#141414;line-height:14px;height:14px;transform:scaleX(0.860);">ﾒｯｼｭ</div>
<svg class="a" style="left:23.8px;top:378px" width="6.4" height="3.6" viewBox="0 0 10 6"><path d="M0 0H10L5 6Z" fill="#686868"/></svg>
<svg class="i blur" style="left:40.4px;top:372.2px;" width="16" height="16" viewBox="0 0 16 16"><path d="M.8 14.600V1.800h5l1.400 1.800h8v11z" fill="#f4f4f4" stroke="#4c4c4c" stroke-width="1.300" stroke-linejoin="round"/><rect x="3.400" y="6.200" width="9.600" height="6.600" fill="#fff" stroke="#444" stroke-width=".9"/><path d="M4.600 7.400h2.600v2h2.400v1.400h2.400v1.200H4.600z" fill="#2a78d0"/><path d="M4.600 7.400h2.600v1.600H4.600z" fill="#e0301e"/><path d="M4.600 9h2.600v1.200H4.600z" fill="#f0c21e"/><path d="M7.200 9.400h2.400v1.400H7.200z" fill="#36b82e"/></svg>
<div class="t" style="left:59.8px;top:373.7px;font-size:10.10px;color:#141414;line-height:14px;height:14px;transform:scaleX(0.930);">ﾒｯｼｭ特性ﾌﾟﾛｯﾄ</div>
<svg class="i blur" style="left:60.6px;top:391px;" width="16" height="16" viewBox="0 0 16 16"><path d="M1 4.400l4.600-2.800 4 1.400 4.600 2.400v6.800L9 15.400 1 11.600z" fill="#2a78d0"/><path d="M1 4.400l4.600-2.800 4 1.400L5 5.800z" fill="#e8281c"/><path d="M5 5.800l4.600-2.800 4.600 2.400L9.400 8.200z" fill="#f0a01c"/><path d="M1 4.400l4 1.400v3.600L1 8z" fill="#e8281c"/><path d="M1 8l4 1.400v3.800L1 11.600z" fill="#38b830"/><path d="M5 5.800l4.400 2.400v3.400L5 9.400z" fill="#f4e32a"/><path d="M5 9.400l4.400 2.200v3.800L5 13.200z" fill="#2a78d0"/><path d="M9.400 8.200l4.800-2.800v3.400l-4.800 2.800z" fill="#38b830"/><path d="M9.400 11.600l4.800-2.800v3.400L9.400 15.400z" fill="#1d48b8"/><path d="M5 5.800v7.400M1 8l4 1.400 4.400 2.200 4.800-2.800M9.400 8.200v7.200" fill="none" stroke="#333" stroke-width=".5" stroke-opacity=".6"/></svg>
<div class="t" style="left:79.2px;top:392.5px;font-size:10.10px;color:#141414;line-height:14px;height:14px;transform:scaleX(1.016);">品質1 (-ﾒｯｼｭ-)</div>
<svg class="i blur" style="left:20.4px;top:409.6px;" width="16" height="16" viewBox="0 0 16 16"><rect x=".8" y=".8" width="14.400" height="14.400" rx="1.600" fill="#fbfbfb" stroke="#5a5a5a" stroke-width="1.100"/><path d="M7 4.200h6M7 8h6M7 11.800h6" stroke="#6a6a6a" stroke-width="1"/><circle cx="4.200" cy="4.200" r="1.200" fill="#fff" stroke="#8a8a8a" stroke-width=".8"/><circle cx="4.200" cy="8" r="1.200" fill="#fff" stroke="#8a8a8a" stroke-width=".8"/><circle cx="4.200" cy="11.800" r="1.400" fill="#2a78b8"/></svg>
<div class="t" style="left:40.4px;top:411.1px;font-size:10.10px;color:#141414;line-height:14px;height:14px;transform:scaleX(0.968);">結果ｵﾌﾟｼｮﾝ</div>
<svg class="a" style="left:4.4px;top:434.3px" width="6.4" height="3.6" viewBox="0 0 10 6"><path d="M0 0H10L5 6Z" fill="#686868"/></svg>
<svg class="i blur" style="left:20.4px;top:428.5px;" width="16" height="16" viewBox="0 0 16 16"><path d="M.8 14.600V1.800h5l1.400 1.800h8v11z" fill="#f4f4f4" stroke="#4c4c4c" stroke-width="1.300" stroke-linejoin="round"/><path d="M4 6h3.400v3.400h4.800v3.600H4z" fill="url(#rb)" stroke="#333" stroke-width=".6"/></svg>
<div class="t" style="left:40.4px;top:430.0px;font-size:10.10px;color:#141414;line-height:14px;height:14px;transform:scaleX(0.970);">結果</div>
<svg class="i blur" style="left:40.4px;top:447.4px;" width="16" height="16" viewBox="0 0 16 16"><path d="M.9 3L4.900 4.900V8.600L9.800 10.900V15.300L.9 11.100z" fill="url(#ctA)"/><path d="M.9 3L6.700 .7l3.800 1.700-5.600 2.500z" fill="#e01212"/><path d="M4.900 4.900l5.600-2.500V6L4.900 8.600z" fill="url(#ctB)"/><path d="M4.900 8.600L10.500 6l3.900 1.800-4.600 3.100z" fill="#34d41e"/><path d="M9.800 10.900l4.600-3.100v4.400l-4.600 3.100z" fill="url(#ctC)"/><path d="M.9 3L6.700 .7l3.800 1.700V6l3.900 1.800v4.400l-4.600 3.100L.9 11.100z" fill="none" stroke="#2a2a2a" stroke-width=".7" stroke-linejoin="round"/><path d="M4.900 4.900V8.600l4.900 2.300" fill="none" stroke="#1a3a10" stroke-opacity=".55" stroke-width=".6"/></svg>
<div class="t" style="left:59.8px;top:448.9px;font-size:10.10px;color:#141414;line-height:14px;height:14px;transform:scaleX(1.027);">応力1 (-vonMises-)</div>
<svg class="i blur" style="left:40.4px;top:466.8px;" width="16" height="16" viewBox="0 0 16 16"><path d="M.9 3L4.900 4.900V8.600L9.800 10.900V15.300L.9 11.100z" fill="url(#ctA)"/><path d="M.9 3L6.700 .7l3.800 1.700-5.600 2.500z" fill="#e01212"/><path d="M4.900 4.900l5.600-2.500V6L4.900 8.600z" fill="url(#ctB)"/><path d="M4.900 8.600L10.500 6l3.900 1.800-4.600 3.100z" fill="#34d41e"/><path d="M9.800 10.900l4.600-3.100v4.400l-4.600 3.100z" fill="url(#ctC)"/><path d="M.9 3L6.700 .7l3.800 1.700V6l3.900 1.800v4.400l-4.600 3.100L.9 11.100z" fill="none" stroke="#2a2a2a" stroke-width=".7" stroke-linejoin="round"/><path d="M4.900 4.900V8.600l4.900 2.300" fill="none" stroke="#1a3a10" stroke-opacity=".55" stroke-width=".6"/></svg>
<div class="t" style="left:59.8px;top:468.3px;font-size:10.10px;color:#141414;line-height:14px;height:14px;transform:scaleX(1.055);">変位1 (-合成変位-)</div>
<svg class="i blur" style="left:40.4px;top:485.9px;" width="16" height="16" viewBox="0 0 16 16"><path d="M.9 3L4.900 4.900V8.600L9.800 10.900V15.300L.9 11.100z" fill="url(#ctA)"/><path d="M.9 3L6.700 .7l3.800 1.700-5.600 2.500z" fill="#e01212"/><path d="M4.900 4.900l5.600-2.500V6L4.900 8.600z" fill="url(#ctB)"/><path d="M4.900 8.600L10.500 6l3.900 1.800-4.600 3.100z" fill="#34d41e"/><path d="M9.800 10.900l4.600-3.100v4.400l-4.600 3.100z" fill="url(#ctC)"/><path d="M.9 3L6.700 .7l3.800 1.700V6l3.900 1.800v4.400l-4.600 3.100L.9 11.100z" fill="none" stroke="#2a2a2a" stroke-width=".7" stroke-linejoin="round"/><path d="M4.900 4.900V8.600l4.900 2.300" fill="none" stroke="#1a3a10" stroke-opacity=".55" stroke-width=".6"/></svg>
<div class="t" style="left:59.8px;top:487.4px;font-size:10.10px;color:#141414;line-height:14px;height:14px;transform:scaleX(1.080);">ひずみ1 (-相当-)</div>
<div class="t" style="left:52.600px;top:444.400px;font-size:7px;line-height:8px;color:#222;font-style:italic">σ</div>
<div class="t" style="left:52.600px;top:463.800px;font-size:7px;line-height:8px;color:#222;font-style:italic">u</div>
<div class="t" style="left:52.600px;top:482.800px;font-size:7px;line-height:8px;color:#222;font-style:italic">ε</div>
<div class="b" style="left:0px;top:494.6px;width:682px;height:13.9px;background:#f7f7f7;"></div>
<div class="b" style="left:0px;top:494.6px;width:682px;height:1.1px;background:#a9a9a9;"></div>
<div class="b" style="left:0px;top:507.9px;width:682px;height:1.1px;background:#b4b4b4;"></div>
<div class="b" style="left:0px;top:509px;width:682px;height:12px;background:#f7f7f7;"></div>
<div class="b" style="left:1.4px;top:495.6px;width:176px;height:12.4px;background:#d2d2d2;"></div>
<div class="b" style="left:1.4px;top:495.6px;width:55.6px;height:12.4px;background:#c4c9cc;box-shadow:inset 0 1px 0 #8c9296;"></div>
<div class="b" style="left:15.2px;top:496px;width:1px;height:12px;background:#aeb2b5;"></div>
<svg class="i" style="left:3.8px;top:497.4px;" width="10" height="9.2" viewBox="0 0 10 9.2"><path d="M2 1.400v6.400" stroke="#aab0b4" stroke-width="1.200"/><path d="M8 1.200v6.800L3 4.600z" fill="#aab0b4"/></svg>
<div class="b" style="left:29px;top:496px;width:1px;height:12px;background:#aeb2b5;"></div>
<svg class="i" style="left:17.6px;top:497.4px;" width="10" height="9.2" viewBox="0 0 10 9.2"><path d="M7.400 1.200v6.800L2.400 4.600z" fill="#aab0b4"/></svg>
<div class="b" style="left:42.8px;top:496px;width:1px;height:12px;background:#aeb2b5;"></div>
<svg class="i" style="left:31.4px;top:497.4px;" width="10" height="9.2" viewBox="0 0 10 9.2"><path d="M2.600 1.200v6.800l5-3.400z" fill="#aab0b4"/></svg>
<div class="b" style="left:56.6px;top:496px;width:1px;height:12px;background:#aeb2b5;"></div>
<svg class="i" style="left:45.2px;top:497.4px;" width="10" height="9.2" viewBox="0 0 10 9.2"><path d="M8 1.400v6.400" stroke="#aab0b4" stroke-width="1.200"/><path d="M2 1.200v6.800l5-3.400z" fill="#aab0b4"/></svg>
<div class="b" style="left:96.2px;top:495.6px;width:1.1px;height:12.4px;background:#a9a9a9;"></div>
<div class="b" style="left:177.3px;top:495.6px;width:74px;height:13.4px;background:#fbfbfb;box-shadow:-1px 0 0 #a9a9a9,1px 0 0 #a9a9a9;"></div>
<div class="t" style="left:67.6px;top:495.0px;font-size:10.10px;color:#1c1c1c;line-height:14px;height:14px;transform:scaleX(0.982);">ﾓﾃﾞﾙ</div>
<div class="t" style="left:102.6px;top:495.0px;font-size:10.10px;color:#1c1c1c;line-height:14px;height:14px;transform:scaleX(0.977);">ﾓｰｼｮﾝ ｽﾀﾃﾞｨ 1</div>
<div class="t" style="left:196.2px;top:495.0px;font-size:10.10px;color:#1c1c1c;line-height:14px;height:14px;transform:scaleX(1.033);">静解析 1</div>
<svg class="i blur" style="left:184.4px;top:497.6px;" width="8.6" height="8.6" viewBox="0 0 8.6 8.6"><path d="M.8 1l3 6.600M2.600 .8l1 3" stroke="#333" stroke-width=".9"/><path d="M6 1v4" stroke="#2a78c0" stroke-width="1.300"/><path d="M3.800 4.400h4.400L6 7.800z" fill="#2a78c0"/></svg>
<div class="t" style="left:1.0px;top:510.8px;font-size:10.60px;color:#1c1c1c;line-height:14px;height:14px;transform:scaleX(0.875);">SOLIDWORKS Premium 2023 SP5.0</div>
<div class="t" style="left:395.0px;top:511.0px;font-size:10.30px;color:#1c1c1c;line-height:14px;height:14px;transform:scaleX(1.042);">編集中 : Part</div>
<div class="t" style="left:567.7px;top:510.8px;font-size:10.60px;color:#1c1c1c;line-height:14px;height:14px;transform:scaleX(0.919);">MMGS</div>
<svg class="i blur" style="left:480.5px;top:510.6px;" width="14" height="11" viewBox="0 0 14 11"><path d="M4.600 .8L9 8.800H.2z" fill="#f4c21e" stroke="#b8860a" stroke-width=".7"/><path d="M4.600 3.400v3" stroke="#c8281e" stroke-width="1.100"/><path d="M6.800 9.400l4.600-6" stroke="#222" stroke-width="1.600"/><path d="M8.800 2.200l4.200-.8-.6 4.400z" fill="#222"/><path d="M6 9.600l3 1.400" stroke="#2a78c0" stroke-width="1.400"/></svg>
<svg class="i" style="left:623.4px;top:515.2px;" width="4.800" height="3" viewBox="0 0 10 6"><path d="M0 6H10L5 0Z" fill="#444"/></svg>
<svg class="i blur" style="left:650.4px;top:511.4px;" width="15.6" height="10" viewBox="0 0 15.6 10"><path d="M1.400 5.200L4.800 1l9.400 3.800-1.800 5.600H1.600z" fill="#ececec" stroke="#3c3c3c" stroke-width="1.100"/><circle cx="5.200" cy="4" r="1.500" fill="#fff" stroke="#3c3c3c" stroke-width=".8"/><path d="M7.200 8l2.800-3" stroke="#3c3c3c" stroke-width="1.500"/></svg>
<div class="b" style="left:680px;top:514.8px;width:1.2px;height:1.2px;background:#b4b4b4;"></div>
<div class="b" style="left:677.6px;top:517.6px;width:1.2px;height:1.2px;background:#b4b4b4;"></div>
<div class="b" style="left:680px;top:517.6px;width:1.2px;height:1.2px;background:#b4b4b4;"></div>
<div class="b" style="left:675.4px;top:520px;width:1.2px;height:1.2px;background:#b4b4b4;"></div>
<div class="b" style="left:677.6px;top:520px;width:1.2px;height:1.2px;background:#b4b4b4;"></div>
<div class="b" style="left:680px;top:520px;width:1.2px;height:1.2px;background:#b4b4b4;"></div>
</div></div>
<div id="xl"><div class="soft">
<svg class="i" style="left:0;top:0" width="527" height="385" viewBox="0 0 527 385"><path d="M0 13.90H527M0 29.17H527M0 44.44H527M0 59.71H527M0 74.98H527M0 90.25H527M0 105.52H527M0 120.79H527M0 136.06H527M0 151.33H527M0 166.60H527M0 181.87H527M0 197.14H527M0 212.41H527M0 227.68H527M0 242.95H527M0 258.22H527M0 273.49H527M0 288.76H527M0 304.03H527M0 319.30H527M0 334.57H527M0 349.84H527M0 365.11H527M0 380.38H527M0 395.65H527M42.40 0V106M86.50 0V106M130.60 0V106M174.70 0V106M218.80 0V106M262.90 0V106M307.00 0V106M351.10 0V106M395.20 0V106M439.30 0V106M483.40 0V106M527.50 0V106" fill="none" stroke="#dedede" stroke-width="1.1"/></svg>
<div class="b" style="left:44.4px;top:14.4px;width:41.800px;height:14px;overflow:hidden"><div class="t" style="left:0.0px;top:0.1px;font-size:8.75px;color:#555;line-height:14px;height:14px;">プロット名</div></div>
<div class="t" style="left:88.3px;top:14.5px;font-size:8.75px;color:#555;line-height:14px;height:14px;transform:scaleX(1.012);">ひずみ1</div>
<div class="t" style="left:44.7px;top:29.7px;font-size:8.75px;color:#555;line-height:14px;height:14px;">要素番号</div>
<div class="t" style="left:109.6px;top:29.9px;font-size:8.80px;color:#555;line-height:14px;height:14px;transform:scaleX(0.971);">4005</div>
<div class="t" style="left:44.7px;top:45.1px;font-size:8.75px;color:#555;line-height:14px;height:14px;">最小値</div>
<div class="t" style="left:92.0px;top:45.3px;font-size:8.80px;color:#555;line-height:14px;height:14px;transform:scaleX(1.025);">2.57E-06</div>
<div class="t" style="left:44.7px;top:60.3px;font-size:8.75px;color:#555;line-height:14px;height:14px;">要素番号</div>
<div class="t" style="left:109.6px;top:60.5px;font-size:8.80px;color:#555;line-height:14px;height:14px;transform:scaleX(0.971);">1986</div>
<div class="t" style="left:44.7px;top:75.6px;font-size:8.75px;color:#555;line-height:14px;height:14px;">最大値</div>
<div class="t" style="left:92.0px;top:75.8px;font-size:8.80px;color:#555;line-height:14px;height:14px;">0.000757</div>
<div class="b pic" style="left:42.4px;top:105.8px;width:473px;height:280px;overflow:hidden;background:radial-gradient(ellipse 330px 150px at 60px 20px,#fff 0,rgba(255,255,255,.9) 40%,rgba(255,255,255,0) 100%),radial-gradient(ellipse 280px 120px at 340px 80px,rgba(226,229,236,.9) 0,rgba(226,229,236,0) 100%),linear-gradient(to bottom,#f0f1f5 0,#edeff3 30%,#f1f2f5 50%,#f9f9fb 68%,#fff 85%)">
<svg class="i blur" style="left:0;top:0" width="473" height="280" viewBox="0 0 473 280"><g transform="translate(-146.42 -122.94) scale(0.914)"><use href="#beam"/>
<g fill="none" stroke="#62aef0" stroke-width=".9" stroke-opacity=".85"><path d="M240.3 274.5L539.4 353.2L540.0 368.6L241.9 289.8"/><path d="M539.4 353.2L553.8 338.2" stroke-dasharray="2 2.400" stroke-width="1.600"/></g>
</g>
<circle cx="101.4" cy="121.6" r="1.700" fill="#111"/><path d="M101.4 121.6L118.6 122.5H131.1" fill="none" stroke="#222" stroke-width=".8"/>
<circle cx="343.2" cy="241.8" r="1.500" fill="#111"/><path d="M343.2 241.4H371.6" fill="none" stroke="#222" stroke-width=".8"/>
</svg>
<div class="b" style="left:131.1px;top:117.4px;width:57px;height:9.400px;background:#fff;box-shadow:inset 0 0 0 .8px #333"></div>
<div class="b" style="left:371.6px;top:236.6px;width:57.600px;height:9.200px;background:#fff;box-shadow:inset 0 0 0 .8px #333"></div>
<div class="t" style="left:2.4px;top:18.5px;font-size:7.30px;color:#141414;line-height:10px;height:10px;transform:scaleX(1.034);">ﾓﾃﾞﾙ名: cae</div>
<div class="t" style="left:2.4px;top:27.2px;font-size:7.30px;color:#141414;line-height:10px;height:10px;transform:scaleX(1.010);">ｽﾀﾃﾞｨ名: 静解析 1(-ﾃﾞﾌｫﾙﾄ-)</div>
<div class="t" style="left:2.4px;top:35.9px;font-size:7.30px;color:#141414;line-height:10px;height:10px;transform:scaleX(0.983);">表示ﾀｲﾌﾟ: 静ひずみ ひずみ1</div>
<div class="t" style="left:2.4px;top:44.6px;font-size:7.30px;color:#141414;line-height:10px;height:10px;transform:scaleX(1.076);">変形ｽｹｰﾙ: 8.13811</div>
<div class="t" style="left:377.3px;top:67.1px;font-size:8.00px;color:#1c1c1c;line-height:10px;height:10px;transform:scaleX(0.859);">ESTRN</div>
<div class="b" style="left:378.2px;top:91.0px;width:12.500px;height:172px;background:linear-gradient(to bottom,#ff0000 0,#ff1e00 4%,#ff9800 15%,#ffff00 27%,#8cff00 38%,#00ff00 50%,#00ff8c 62%,#00ffff 75%,#0090ff 86%,#0000ff 97%,#0000ff 100%)"></div>
<div class="b" style="left:378.2px;top:90.5px;width:13.600px;height:.9px;background:#2a2a2a"></div>
<div class="t" style="left:395.6px;top:84.1px;font-size:8.00px;color:#1c1c1c;line-height:10px;height:10px;transform:scaleX(0.988);">7.574e-04</div>
<div class="t" style="left:395.6px;top:101.3px;font-size:8.00px;color:#1c1c1c;line-height:10px;height:10px;transform:scaleX(0.988);">6.819e-04</div>
<div class="b" style="left:391.0px;top:108.5px;width:1px;height:1px;background:#444"></div>
<div class="t" style="left:395.6px;top:118.4px;font-size:8.00px;color:#1c1c1c;line-height:10px;height:10px;transform:scaleX(0.988);">6.065e-04</div>
<div class="b" style="left:391.0px;top:125.7px;width:1px;height:1px;background:#444"></div>
<div class="t" style="left:395.6px;top:135.5px;font-size:8.00px;color:#1c1c1c;line-height:10px;height:10px;transform:scaleX(0.988);">5.310e-04</div>
<div class="b" style="left:391.0px;top:142.8px;width:1px;height:1px;background:#444"></div>
<div class="t" style="left:395.6px;top:152.7px;font-size:8.00px;color:#1c1c1c;line-height:10px;height:10px;transform:scaleX(0.988);">4.555e-04</div>
<div class="b" style="left:391.0px;top:160.0px;width:1px;height:1px;background:#444"></div>
<div class="t" style="left:395.6px;top:169.8px;font-size:8.00px;color:#1c1c1c;line-height:10px;height:10px;transform:scaleX(0.988);">3.800e-04</div>
<div class="b" style="left:391.0px;top:177.1px;width:1px;height:1px;background:#444"></div>
<div class="t" style="left:395.6px;top:187.0px;font-size:8.00px;color:#1c1c1c;line-height:10px;height:10px;transform:scaleX(0.988);">3.045e-04</div>
<div class="b" style="left:391.0px;top:194.2px;width:1px;height:1px;background:#444"></div>
<div class="t" style="left:395.6px;top:204.1px;font-size:8.00px;color:#1c1c1c;line-height:10px;height:10px;transform:scaleX(0.988);">2.290e-04</div>
<div class="b" style="left:391.0px;top:211.4px;width:1px;height:1px;background:#444"></div>
<div class="t" style="left:395.6px;top:221.2px;font-size:8.00px;color:#1c1c1c;line-height:10px;height:10px;transform:scaleX(0.988);">1.535e-04</div>
<div class="b" style="left:391.0px;top:228.5px;width:1px;height:1px;background:#444"></div>
<div class="t" style="left:395.6px;top:238.4px;font-size:8.00px;color:#1c1c1c;line-height:10px;height:10px;transform:scaleX(0.988);">7.805e-05</div>
<div class="b" style="left:391.0px;top:245.7px;width:1px;height:1px;background:#444"></div>
<div class="t" style="left:395.6px;top:255.5px;font-size:8.00px;color:#1c1c1c;line-height:10px;height:10px;transform:scaleX(0.988);">2.566e-06</div>
<div class="b" style="left:391.0px;top:262.8px;width:1px;height:1px;background:#444"></div>
<div class="t" style="left:133.3px;top:117.3px;font-size:7.60px;color:#222;line-height:10px;height:10px;transform:scaleX(0.980);">最大: 7.574e-04</div>
<div class="t" style="left:373.8px;top:236.4px;font-size:7.60px;color:#222;line-height:10px;height:10px;transform:scaleX(0.988);">最小: 2.566e-06</div>
<div class="b" style="left:377.6px;top:236.6px;width:13px;height:.8px;background:#333;opacity:.7"></div>
<div class="b" style="left:377.6px;top:245.0px;width:13px;height:.8px;background:#333;opacity:.7"></div>
</div>
</div></div>
</body></html>
